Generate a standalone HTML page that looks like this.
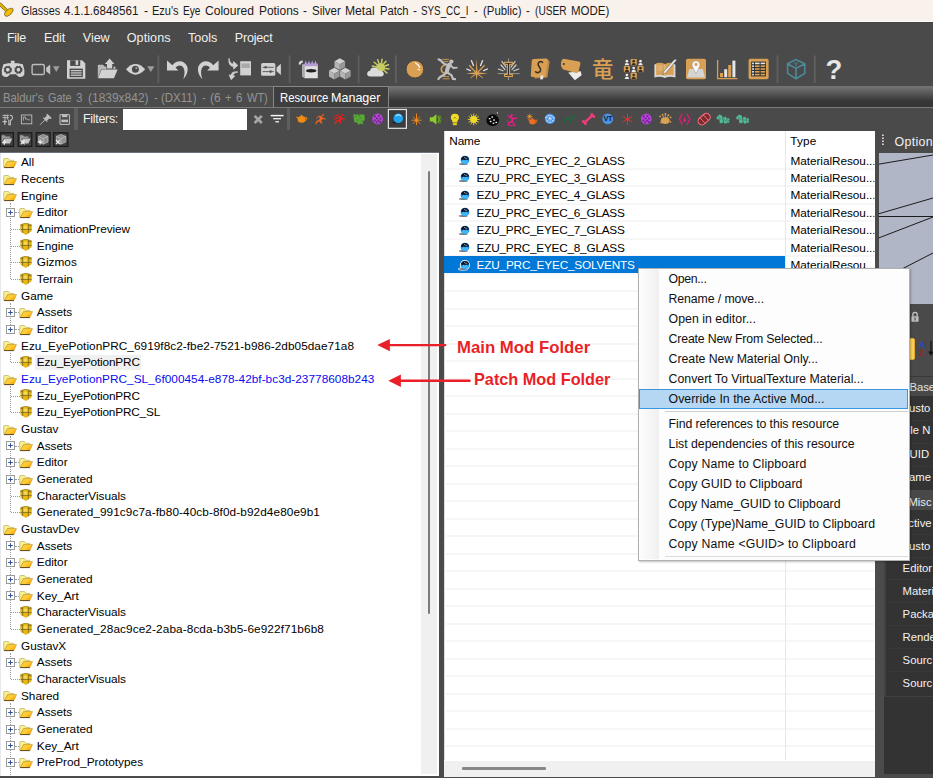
<!DOCTYPE html>
<html lang="en"><head><meta charset="utf-8"><title>Glasses - Resource Manager</title>
<style>
html,body{margin:0;padding:0;background:#4a4a4a;}
#app{position:relative;width:933px;height:778px;overflow:hidden;background:#4a4a4a;font-family:"Liberation Sans",sans-serif;}
#app div,#app span.t,#app svg{position:absolute;}
#app span.t{white-space:pre;line-height:20px;}
#app div.g{left:0;top:0;width:933px;height:778px;pointer-events:none;}
#app span.w{display:inline-block;white-space:pre;transform-origin:0 50%;}

</style></head>
<body>
<div id="app">
<div class="g" role="banner" aria-label="Title bar">
<div style="left:0px;top:0px;width:933px;height:22px;background:#f9f1eb;"></div>
<div style="left:0px;top:21px;width:933px;height:1px;background:#fdfcfb;"></div>
<div style="left:0px;top:22px;width:933px;height:1px;background:#454545;"></div>
<svg style="left:0;top:0" width="16" height="20" viewBox="0 0 16 20"><path d="M0 4.2 L6.2 10.2" stroke="#6a5408" stroke-width="3.2" stroke-linecap="round"/><path d="M0 4.2 L6.2 10.2" stroke="#e8b400" stroke-width="2.2" stroke-linecap="round"/><path d="M5.2 12 Q8 8.4 11.6 8.2 Q13.8 8.6 13 10.8 Q11.6 14.6 7.6 16.2 Q4.8 16.8 4.6 14.6 Q4.6 13 5.2 12 Z" fill="#f4be08" stroke="#5c4a10" stroke-width="0.7"/></svg>
<span class="t" style="left:20.70px;top:1.1px;font-size:12.3px;color:#1a1a1a;"><span class="w" style="width:43.20px;transform:scaleX(0.8801);">Glasses </span><span class="w" style="width:79.70px;transform:scaleX(0.9459);">4.1.1.6848561 </span><span class="w" style="width:8.20px;transform:scaleX(1.0010);">- </span><span class="w" style="width:31.10px;transform:scaleX(0.8959);">Ezu&#x27;s </span><span class="w" style="width:22.00px;transform:scaleX(0.8163);">Eye </span><span class="w" style="width:54.50px;transform:scaleX(0.9817);">Coloured </span><span class="w" style="width:44.00px;transform:scaleX(0.9678);">Potions </span><span class="w" style="width:8.60px;transform:scaleX(0.9522);">- </span><span class="w" style="width:33.30px;transform:scaleX(0.9362);">Silver </span><span class="w" style="width:34.50px;transform:scaleX(0.9876);">Metal </span><span class="w" style="width:33.00px;transform:scaleX(0.9093);">Patch </span><span class="w" style="width:8.60px;transform:scaleX(0.9522);">- </span><span class="w" style="width:52.40px;transform:scaleX(0.7987);">SYS_CC_I </span><span class="w" style="width:9.20px;transform:scaleX(0.9033);">- </span><span class="w" style="width:43.50px;transform:scaleX(0.9257);">(Public) </span><span class="w" style="width:8.30px;transform:scaleX(0.9278);">- </span><span class="w" style="width:36.50px;transform:scaleX(0.8258);">(USER </span><span class="w" style="width:39.30px;transform:scaleX(0.9342);">MODE)</span></span>
</div>
<div class="g" role="menubar" aria-label="Menu bar">
<span class="t" style="left:7px;top:27.6px;font-size:12.6px;color:#f0f0f0;letter-spacing:-0.374px;">File</span>
<span class="t" style="left:43.9px;top:27.6px;font-size:12.6px;color:#f0f0f0;letter-spacing:-0.101px;">Edit</span>
<span class="t" style="left:82.8px;top:27.6px;font-size:12.6px;color:#f0f0f0;letter-spacing:-0.070px;">View</span>
<span class="t" style="left:126.7px;top:27.6px;font-size:12.6px;color:#f0f0f0;letter-spacing:0.071px;">Options</span>
<span class="t" style="left:188.1px;top:27.6px;font-size:12.6px;color:#f0f0f0;letter-spacing:-0.061px;">Tools</span>
<span class="t" style="left:234.8px;top:27.6px;font-size:12.6px;color:#f0f0f0;letter-spacing:-0.215px;">Project</span>
</div>
<div class="g" role="toolbar" aria-label="Main toolbar">
<svg style="left:0;top:54px" width="933" height="32" viewBox="0 54 933 32"><path d="M3.4 64.2 Q13 61.6 22.8 64.2 Q25 69.5 24.3 74.8 Q22.4 77.6 19 76.9 L15.8 74.3 L10.4 74.3 L7.2 76.9 Q3.8 77.6 1.9 74.8 Q1.2 69.5 3.4 64.2 Z" fill="#d2d2d2"/><rect x="10.9" y="60.7" width="3.6" height="2.4" rx="0.6" fill="#d2d2d2"/><circle cx="7.8" cy="69.8" r="3.1" fill="none" stroke="#4a4a4a" stroke-width="2" stroke-dasharray="1.7 0.75"/><circle cx="7.8" cy="69.8" r="2.6" fill="none" stroke="#4a4a4a" stroke-width="1.3"/><circle cx="18.4" cy="69.8" r="3.1" fill="none" stroke="#4a4a4a" stroke-width="2" stroke-dasharray="1.7 0.75"/><circle cx="18.4" cy="69.8" r="2.6" fill="none" stroke="#4a4a4a" stroke-width="1.3"/><rect x="32.1" y="64.5" width="12.2" height="10" rx="1.6" fill="none" stroke="#bcbcbc" stroke-width="1.4"/><path d="M46.2 67.8 L50.2 64.4 L50.2 74.6 L46.2 71.2 Z" fill="#c4c4c4"/><path d="M53 66.2 H59.6 L56.3 72 Z" fill="#9c9c9c"/><path d="M67 60.3 H82.2 L85.3 63.4 V78.7 H67 Z" fill="#d2d2d2"/><rect x="70.2" y="60.3" width="10" height="5.6" fill="#4a4a4a"/><rect x="75.6" y="60.3" width="2.6" height="4.6" fill="#d2d2d2"/><rect x="69.6" y="68.6" width="13.2" height="8.6" fill="#4a4a4a"/><rect x="70.8" y="70.0" width="10.8" height="1.3" fill="#c8c8c8"/><rect x="70.8" y="72.3" width="10.8" height="1.3" fill="#c8c8c8"/><rect x="70.8" y="74.6" width="10.8" height="1.3" fill="#c8c8c8"/><path d="M97.8 78.2 V65.6 Q97.8 64.8 98.6 64.8 H103 L104.6 66.6 H106.4 V69.2 H101.2 L97.8 78.2 Z" fill="#b8b8b8"/><path d="M101.6 69.6 H117.6 L114 78.3 H98 Z" fill="#d2d2d2"/><path d="M109.6 58.4 L114.4 63.9 H112.2 V68.4 H107 V63.9 H104.8 Z" fill="#d2d2d2"/><path d="M113.4 66.6 H115.4 V69.2 H113.4 Z" fill="#b8b8b8"/><path d="M126 69.3 Q135.4 58.6 145.2 69.3 Q135.4 80 126 69.3 Z" fill="#d2d2d2"/><circle cx="135.4" cy="69.3" r="3.5" fill="#4a4a4a"/><circle cx="136.4" cy="68.2" r="1.1" fill="#9a9a9a"/><path d="M147.2 66.2 H154.4 L150.8 72 Z" fill="#9c9c9c"/><path d="M167 60.4 L172.4 65.2 C176 60 184 59.6 187 66 C188.8 70.5 186.6 76 183.3 78.9 C184.8 74.5 185 70.6 183.6 68 C181.8 64.7 178 64.8 175.6 67.8 L178.4 70.4 L167 70.4 Z" fill="#d2d2d2"/><path d="M218.6 60.4 L213.2 65.2 C209.6 60 201.6 59.6 198.6 66 C196.8 70.5 199.0 76 202.3 78.9 C200.8 74.5 200.6 70.6 202.0 68 C203.8 64.7 207.6 64.8 210.0 67.8 L207.2 70.4 L218.6 70.4 Z" fill="#d2d2d2"/><rect x="240.2" y="61.2" width="10.8" height="14.2" fill="#d2d2d2"/><rect x="241.4" y="63.4" width="8.4" height="4.6" fill="#aaaaaa"/><path d="M229 58.4 Q229.6 63.4 233.6 64.2 L233.6 61.6 L237.8 65.4 L233.6 69 L233.6 66.6 Q228 66 229 58.4 Z" fill="#d2d2d2" stroke="#d2d2d2" stroke-width="0.8"/><path d="M237.8 72 Q233.6 72.4 232.6 75.6 L234.8 76 L231.2 79.6 L229.2 75 L231 75.3 Q232 71 237.8 72 Z" fill="#d2d2d2" stroke="#d2d2d2" stroke-width="0.8"/><rect x="261.1" y="63" width="14.2" height="12.8" rx="1.6" fill="#d2d2d2"/><path d="M276.6 67.6 L280.9 63.8 L280.9 75 L276.6 71.2 Z" fill="#d2d2d2"/><path d="M262.6 67.3 H273.8 M262.6 71.6 H273.8" stroke="#555" stroke-width="0.9"/><circle cx="265.6" cy="67.3" r="1.3" fill="#555"/><circle cx="270.6" cy="71.6" r="1.3" fill="#555"/><path d="M302.2 64.6 H317.8 V78.2 H304.6 L302.2 76.2 Z" fill="#e0e0e0"/><path d="M302.2 64.6 L304.8 66 V78.2 L302.2 76.2 Z" fill="#a8a8a8"/><path d="M298.6 64.6 Q298.6 60.8 302.8 60.6 L302.8 62.4 Q300.6 62.8 300.8 64.6 Z" fill="#d8d8d8"/><rect x="304.4" y="63.6" width="13.4" height="2.6" fill="#b49ad6"/><path d="M304.5 64 L305.8 60.2 L307.1 64 Z" fill="#b49ad6"/><path d="M307.7 64 L309 60.2 L310.3 64 Z" fill="#b49ad6"/><path d="M310.9 64 L312.2 60.2 L313.5 64 Z" fill="#b49ad6"/><path d="M314.09999999999997 64 L315.4 60.2 L316.7 64 Z" fill="#b49ad6"/><ellipse cx="311.2" cy="70.8" rx="5.2" ry="1.7" fill="#222"/><path d="M339.8 58.300000000000004 L345.11 61.25 L339.8 64.2 L334.49 61.25 Z" fill="#d0d0d0"/><path d="M334.49 61.25 L339.8 64.2 L339.8 70.10000000000001 L334.49 67.15 Z" fill="#b4b4b4"/><path d="M345.11 61.25 L339.8 64.2 L339.8 70.10000000000001 L345.11 67.15 Z" fill="#989898"/><path d="M334.3 67.69999999999999 L339.61 70.64999999999999 L334.3 73.6 L328.99 70.64999999999999 Z" fill="#d0d0d0"/><path d="M328.99 70.64999999999999 L334.3 73.6 L334.3 79.5 L328.99 76.55 Z" fill="#b4b4b4"/><path d="M339.61 70.64999999999999 L334.3 73.6 L334.3 79.5 L339.61 76.55 Z" fill="#989898"/><path d="M345.4 67.69999999999999 L350.71 70.64999999999999 L345.4 73.6 L340.09 70.64999999999999 Z" fill="#d0d0d0"/><path d="M340.09 70.64999999999999 L345.4 73.6 L345.4 79.5 L340.09 76.55 Z" fill="#b4b4b4"/><path d="M350.71 70.64999999999999 L345.4 73.6 L345.4 79.5 L350.71 76.55 Z" fill="#989898"/><path d="M375.7 69.4 L372.7 70.5" stroke="#c6cc62" stroke-width="1.5" stroke-linecap="round"/><path d="M375.5 66.7 L372.3 66.1" stroke="#c6cc62" stroke-width="1.5" stroke-linecap="round"/><path d="M376.6 64.3 L374.2 62.2" stroke="#c6cc62" stroke-width="1.5" stroke-linecap="round"/><path d="M378.8 62.7 L377.7 59.7" stroke="#c6cc62" stroke-width="1.5" stroke-linecap="round"/><path d="M381.5 62.5 L382.1 59.3" stroke="#c6cc62" stroke-width="1.5" stroke-linecap="round"/><path d="M383.9 63.6 L386.0 61.2" stroke="#c6cc62" stroke-width="1.5" stroke-linecap="round"/><path d="M385.5 65.8 L388.5 64.7" stroke="#c6cc62" stroke-width="1.5" stroke-linecap="round"/><path d="M385.7 68.5 L388.9 69.1" stroke="#c6cc62" stroke-width="1.5" stroke-linecap="round"/><path d="M384.6 70.9 L387.0 73.0" stroke="#c6cc62" stroke-width="1.5" stroke-linecap="round"/><circle cx="380.6" cy="67.6" r="4.6" fill="#c6cc62"/><path d="M370.4 76.4 Q367 76.2 367.1 73.4 Q367.4 71 370 70.8 Q370.6 67.4 374.2 67.4 Q377.4 67.6 378.2 70.4 Q380.6 69.6 382 71.4 Q384 71.8 383.8 74.2 Q383.6 76.4 381 76.4 Z" fill="#dcdcdc"/><circle cx="414.9" cy="69.2" r="8.8" fill="#d9a054" stroke="#3a3a3a" stroke-width="0.8"/><path d="M415.6 63 Q418.6 64.4 419.6 67.4" stroke="#fff" stroke-width="1.3" fill="none" stroke-linecap="round"/><path d="M418 69.4 L419.8 69.8" stroke="#f4e6d0" stroke-width="1.2" fill="none" stroke-linecap="round"/><path d="M442.6 59.4 H449 M443.4 61.6 H448.4 M443 76.6 H449 M442.6 78.8 H449.4" stroke="#d9a054" stroke-width="0.9"/><path d="M445.4 64.6 Q439.6 67.4 441.8 71.4 Q443.6 73.8 447.4 73.2" stroke="#d9a054" stroke-width="1.7" fill="none"/><g stroke="#c0c0c0" fill="none" stroke-linecap="round" stroke-linejoin="round"><path d="M438.6 59.4 Q441.4 60 442.6 62.6 Q444.6 65 448.6 64.8" stroke-width="2.2"/><path d="M449.6 64.6 Q447 68 446.8 72" stroke-width="4.2"/><path d="M450.8 65.6 L453.4 68 L456.8 67.6" stroke-width="1.9"/><path d="M446.4 72.4 Q444 75.8 440.6 76.6 L438.4 79" stroke-width="2.2"/><path d="M447.6 72.6 L451.6 75.4 L453 79 L455 79.2" stroke-width="2.2"/></g><circle cx="451.4" cy="61.6" r="2.1" fill="#c0c0c0"/><path d="M476.6 58.4 L477.5 72.2 L488.2 73.4 L477.5 74.6 L476.6 80.2 L475.7 74.6 L465.8 73.4 L475.7 72.2 Z" fill="#d9a054"/><path d="M469.2 65.2 L476.6 73.4 L484.6 65.2" stroke="#d9a054" stroke-width="1.3" fill="none"/><path d="M470.6 77.8 L476.6 73.4 L482.8 77.8" stroke="#d9a054" stroke-width="1" fill="none"/><path d="M471.4 60.6 L473.4 65.6 M482.6 60.6 L480.6 65.6 M466.8 69 L470.4 70.6 M487.4 69 L483.6 70.6" stroke="#e4e4e4" stroke-width="1.3" stroke-linecap="round"/><path d="M508.5 58.6 V80 M497.6 73.6 H519.6" stroke="#a8a8a8" stroke-width="0.8"/><path d="M502 61.6 L506 67 M515 61.6 L511 67 M498.4 69 L503 70.8 M518.8 69 L514 70.8 M501 65 L505 69.6 M516 65 L512 69.6" stroke="#cfcfcf" stroke-width="1.2" stroke-linecap="round"/><path d="M504.6 62.4 H512.4 V64.4 H509.6 V74.4 H512.4 V76.4 H504.6 V74.4 H507.4 V64.4 H504.6 Z" fill="#2c2c2c" stroke="#d9a054" stroke-width="1.1"/><path d="M534 61.2 L548 60.2 Q549.8 60.4 549.6 62.2 L547.4 77.6 L534.4 78.6 Z" fill="#c08a44"/><path d="M533.6 59 L546.2 58.6 Q548 58.8 547.8 60.6 L545.6 75.4 Q545.4 76.8 544 76.8 L532.2 77 Q530.6 76.8 530.8 75.2 L531.8 60.6 Q532 59 533.6 59 Z" fill="#d9a054"/><path d="M542.6 62.4 Q540.4 60.6 538.6 62.6 Q537.4 64.6 539.4 67 Q541.4 69.6 540 71.6 Q538.2 73.6 535.6 71.8" stroke="#3a3020" stroke-width="1.5" fill="none" stroke-linecap="round"/><path d="M540.6 75.6 L543.4 75.4 L543 79.2 L540.2 79.4 Z" fill="#e8e8e8"/><path d="M568.2 72.6 L580.8 71.2 L581.6 75.2 L574.8 80.2 Z" fill="#ececec"/><path d="M563.6 58.8 L579 61.6 Q580.8 62.2 580.4 64 L578.4 71.8 Q577.8 73.4 576 73 L563.4 69.4 Q560.6 67 561 63.4 Q561.4 59.6 563.6 58.8 Z" fill="#d9a054"/><circle cx="563.8" cy="64" r="1.1" fill="#3a3a3a"/><circle cx="626.9" cy="61.2" r="1.35" fill="#ececec"/><path d="M624.7 65.3 Q624.7 62.9 626.9 62.9 Q629.1 62.9 629.1 65.3 Z" fill="#ececec"/><rect x="630.6" y="59.0" width="6.2" height="6.4" rx="0.8" fill="#d9a054"/><circle cx="633.7" cy="61.2" r="1.35" fill="#3a3020"/><path d="M631.5 65.3 Q631.5 62.9 633.7 62.9 Q635.9 62.9 635.9 65.3 Z" fill="#3a3020"/><circle cx="640.5" cy="61.2" r="1.35" fill="#ececec"/><path d="M638.3 65.3 Q638.3 62.9 640.5 62.9 Q642.7 62.9 642.7 65.3 Z" fill="#ececec"/><rect x="623.8" y="65.9" width="6.2" height="6.4" rx="0.8" fill="#d9a054"/><circle cx="626.9" cy="68.1" r="1.35" fill="#3a3020"/><path d="M624.7 72.2 Q624.7 69.8 626.9 69.8 Q629.1 69.8 629.1 72.2 Z" fill="#3a3020"/><circle cx="633.7" cy="68.1" r="1.35" fill="#ececec"/><path d="M631.5 72.2 Q631.5 69.8 633.7 69.8 Q635.9 69.8 635.9 72.2 Z" fill="#ececec"/><rect x="637.4" y="65.9" width="6.2" height="6.4" rx="0.8" fill="#d9a054"/><circle cx="640.5" cy="68.1" r="1.35" fill="#3a3020"/><path d="M638.3 72.2 Q638.3 69.8 640.5 69.8 Q642.7 69.8 642.7 72.2 Z" fill="#3a3020"/><circle cx="626.9" cy="75.0" r="1.35" fill="#ececec"/><path d="M624.7 79.1 Q624.7 76.7 626.9 76.7 Q629.1 76.7 629.1 79.1 Z" fill="#ececec"/><rect x="630.6" y="72.8" width="6.2" height="6.4" rx="0.8" fill="#d9a054"/><circle cx="633.7" cy="75.0" r="1.35" fill="#3a3020"/><path d="M631.5 79.1 Q631.5 76.7 633.7 76.7 Q635.9 76.7 635.9 79.1 Z" fill="#3a3020"/><path d="M654.4 64.4 Q660 62.4 664.8 64.6 Q669.6 62.4 675.4 64.4 V77.4 Q669.6 75.6 664.8 78 Q660 75.6 654.4 77.4 Z" fill="#d8d8d8"/><path d="M656.2 63.2 Q660.6 62 664.6 64 V75.8 Q660.6 74 656.2 75.2 Z" fill="#d9a054"/><path d="M673.6 63.2 Q669.2 62 665.2 64 V75.8 Q669.2 74 673.6 75.2 Z" fill="#d9a054"/><path d="M657.6 66 H662.4 M657.6 68 H662.4 M657.6 70 H661.6" stroke="#e8d0a8" stroke-width="0.7"/><path d="M662.8 74.6 L663.6 71.4 L674.4 59.4 Q676 58.6 676.6 60.2 L666 72.8 Z" fill="#e6e6e6" stroke="#555" stroke-width="0.5"/><rect x="686" y="58.8" width="20" height="20.4" rx="1.6" fill="#d9a054"/><path d="M689.4 69 H702.8 L705 77.6 H687 Z" fill="#d4d4d4"/><path d="M696 73.4 Q692 67 692 64.6 Q692.2 61 696 60.8 Q699.8 61 700 64.6 Q700 67 696 73.4 Z" fill="#fafafa" stroke="#777" stroke-width="0.4"/><circle cx="696" cy="64.4" r="1.6" fill="#d9a054"/><path d="M717.6 60 V78.6 H737.4" stroke="#d9a054" stroke-width="1.3" fill="none"/><rect x="720" y="73" width="3" height="4.2" fill="#d9a054"/><rect x="724.2" y="69.2" width="3" height="8" fill="#e6e6e6"/><rect x="728.2" y="65" width="3" height="12.2" fill="#d9a054"/><rect x="732.4" y="60.6" width="3" height="16.6" fill="#e6e6e6"/><rect x="748.6" y="58.8" width="20" height="20.4" rx="1.6" fill="#d9a054"/><rect x="751.2" y="61.6" width="14.8" height="14.8" fill="#333"/><rect x="752" y="62.6" width="2" height="1.6" fill="#d8d8d8"/><rect x="755" y="62.6" width="4.6" height="1.6" fill="#e6e6e6"/><rect x="760.6" y="62.6" width="4.6" height="1.6" fill="#e6e6e6"/><rect x="752" y="65.4" width="2" height="1.6" fill="#d8d8d8"/><rect x="755" y="65.4" width="4.6" height="1.6" fill="#d9a054"/><rect x="760.6" y="65.4" width="4.6" height="1.6" fill="#d9a054"/><rect x="752" y="68.2" width="2" height="1.6" fill="#d8d8d8"/><rect x="755" y="68.2" width="4.6" height="1.6" fill="#d9a054"/><rect x="760.6" y="68.2" width="4.6" height="1.6" fill="#d9a054"/><rect x="752" y="71.0" width="2" height="1.6" fill="#d8d8d8"/><rect x="755" y="71.0" width="4.6" height="1.6" fill="#d9a054"/><rect x="760.6" y="71.0" width="4.6" height="1.6" fill="#d9a054"/><rect x="752" y="73.8" width="2" height="1.6" fill="#d8d8d8"/><rect x="755" y="73.8" width="4.6" height="1.6" fill="#d9a054"/><rect x="760.6" y="73.8" width="4.6" height="1.6" fill="#d9a054"/><path d="M795.6 59.6 L804.8 63.8 V73.4 L796 78.8 L787.6 73.4 V63.8 Z M787.6 63.8 L796 68.4 L804.8 63.8 M796 68.4 V78.8" fill="none" stroke="#4b8b99" stroke-width="1.6" stroke-linejoin="round"/><path d="M794 62.2 L795.9 64.6 L797.8 62.2 M795.9 64.6 V66.6" fill="none" stroke="#4b8b99" stroke-width="1"/><rect x="157.5" y="55.4" width="1.8" height="27.6" fill="#5f5f5f"/><rect x="288.7" y="55.4" width="1.8" height="27.6" fill="#5f5f5f"/><rect x="357.7" y="55.4" width="1.8" height="27.6" fill="#5f5f5f"/><rect x="395.0" y="55.4" width="1.8" height="27.6" fill="#5f5f5f"/><rect x="776.6" y="55.4" width="1.8" height="27.6" fill="#5f5f5f"/><rect x="813.9" y="55.4" width="1.8" height="27.6" fill="#5f5f5f"/></svg>
<span class="t" style="left:592.0px;top:58.2px;font-size:21.4px;color:#d9a054;font-weight:500;line-height:24px;font-family:'Liberation Sans','Noto Sans CJK JP',sans-serif;">竜</span>
<span class="t" style="left:825.4px;top:54.7px;font-size:27.5px;color:#e6e6e6;font-weight:bold;line-height:30px;">?</span>
</div>
<div class="g" role="tablist" aria-label="Document tabs">
<div style="left:0px;top:86px;width:933px;height:21px;background:linear-gradient(#767676 0%,#363636 72%,#363636 100%);"></div>
<div style="left:0px;top:107px;width:933px;height:1px;background:#7a7a7a;"></div>
<div style="left:0px;top:86px;width:273.4px;height:21px;background:#4b4b4b;border-top:1.4px solid #757575;box-sizing:border-box;"></div>
<span class="t" style="left:2.80px;top:87.5px;font-size:12.4px;color:#949494;"><span class="w" style="width:45.50px;transform:scaleX(0.9096);">Baldur&#x27;s </span><span class="w" style="width:27.60px;transform:scaleX(0.8779);">Gate </span><span class="w" style="width:12.50px;transform:scaleX(0.9428);">3 </span><span class="w" style="width:65.40px;transform:scaleX(0.9660);">(1839x842) </span><span class="w" style="width:7.70px;transform:scaleX(0.8961);">- </span><span class="w" style="width:40.10px;transform:scaleX(0.9256);">(DX11) </span><span class="w" style="width:8.40px;transform:scaleX(0.8718);">- </span><span class="w" style="width:15.40px;transform:scaleX(0.9706);">(6 </span><span class="w" style="width:10.60px;transform:scaleX(0.9114);">+ </span><span class="w" style="width:10.60px;transform:scaleX(0.9283);">6 </span><span class="w" style="width:21.80px;transform:scaleX(0.8885);">WT)</span></span>
<div style="left:273px;top:86px;width:115.7px;height:21px;background:#3e3e3e;border:1.9px solid #888888;border-bottom:none;box-sizing:border-box;"></div>
<span class="t" style="left:279.60px;top:87.5px;font-size:12.4px;color:#ffffff;"><span class="w" style="width:51.90px;transform:scaleX(0.9120);">Resource </span><span class="w" style="width:50.50px;transform:scaleX(1.0114);">Manager</span></span>
</div>
<div class="g" role="toolbar" aria-label="Resource filters">
<div style="left:74.4px;top:108px;width:3.4px;height:21.8px;background:#5e5e5e;"></div>
<span class="t" style="left:83px;top:109.0px;font-size:12.4px;color:#f0f0f0;letter-spacing:-0.273px;">Filters:</span>
<div style="left:123px;top:108.8px;width:124px;height:21px;background:#ffffff;"></div>
<div style="left:287.2px;top:108px;width:3px;height:21.8px;background:#5e5e5e;"></div>
<svg style="left:0;top:108px" width="933" height="42" viewBox="0 108 933 42"><path d="M2.4 115.4 H9 M2.4 117.6 H9 M5 114.6 V119.6 M7.4 114.6 V119.6" stroke="#bdbdbd" stroke-width="0.9"/><path d="M9.8 115.4 Q12.6 115 12.4 118 Q12.2 120 10.4 120.4 V124.6 H8.8 V119.6" stroke="#bdbdbd" stroke-width="1.1" fill="none"/><path d="M2.6 121.6 H7 M4.8 119.6 V124.8" stroke="#bdbdbd" stroke-width="1.3"/><rect x="21.4" y="115" width="10.4" height="8.8" fill="none" stroke="#bdbdbd" stroke-width="0.9"/><path d="M23.4 120.6 V117 H25.4 V119 H27 M27 119 L28.4 119.8 H30" stroke="#bdbdbd" stroke-width="0.8" fill="none"/><path d="M40 124.8 L45 119.8" stroke="#bdbdbd" stroke-width="0.9"/><path d="M43.4 117.6 L47.4 121.6 M44.6 119 L47.6 115.6 L49.6 117.6 L46.2 120.6 Z" stroke="#bdbdbd" stroke-width="1.2" fill="#bdbdbd" stroke-linejoin="round"/><path d="M47.2 114.8 L50.6 118.2" stroke="#bdbdbd" stroke-width="1.7" stroke-linecap="round"/><path d="M60 114.6 H69.4 V124.4 H60 Z" fill="none" stroke="#bdbdbd" stroke-width="1"/><rect x="62" y="114.6" width="5.4" height="2.6" fill="#bdbdbd"/><rect x="61.4" y="119.6" width="6.6" height="2.6" fill="#bdbdbd"/><path d="M254.6 115.8 L261.8 123 M261.8 115.8 L254.6 123" stroke="#a6a6a6" stroke-width="2.6"/><path d="M270.7 115.6 H283.6" stroke="#f4f4f4" stroke-width="1.5"/><path d="M273.2 118.7 H281" stroke="#f4f4f4" stroke-width="1.3"/><path d="M275.4 121.8 H279" stroke="#f4f4f4" stroke-width="1.3"/><ellipse cx="301.6" cy="119.39999999999999" rx="3.9" ry="3.3" fill="#f28c12"/><path d="M298.20000000000005 119.2 L296.0 117.0 L296.6 116.39999999999999 L299.0 118.0 Z" fill="#f28c12"/><path d="M304.8 118.2 Q307.6 116.2 306.6 119.39999999999999 Q306.0 120.6 305.0 120.6" stroke="#f28c12" stroke-width="1" fill="none"/><circle cx="301.6" cy="115.6" r="0.9" fill="#f28c12"/><path d="M322.4 113.9 Q323.8 113.7 323.8 115.10000000000001 Q323.59999999999997 116.3 322.4 116.10000000000001 Q321.59999999999997 115.10000000000001 322.4 113.9 Z M318.59999999999997 115.7 L321.8 116.10000000000001 L322.8 118.10000000000001 L325.8 118.5 L325.59999999999997 119.5 L322.2 119.3 L321.2 121.10000000000001 L322.59999999999997 123.3 L321.2 123.7 L319.4 121.5 L317.59999999999997 121.9 L316.0 124.5 L315.2 123.9 L316.59999999999997 120.7 L319.0 119.9 L320.0 117.3 L318.2 117.10000000000001 L317.0 118.9 L316.2 118.3 Z" fill="#f0641e"/><path d="M341.8 113.9 Q343.20000000000005 113.7 343.20000000000005 115.10000000000001 Q343.0 116.3 341.8 116.10000000000001 Q341.0 115.10000000000001 341.8 113.9 Z M338.0 115.7 L341.20000000000005 116.10000000000001 L342.20000000000005 118.10000000000001 L345.20000000000005 118.5 L345.0 119.5 L341.6 119.3 L340.6 121.10000000000001 L342.0 123.3 L340.6 123.7 L338.8 121.5 L337.0 121.9 L335.40000000000003 124.5 L334.6 123.9 L336.0 120.7 L338.40000000000003 119.9 L339.40000000000003 117.3 L337.6 117.10000000000001 L336.40000000000003 118.9 L335.6 118.3 Z" fill="#e8201c"/><path d="M334.2 116.2 L338.6 114.4 M333.8 119.4 L338.2 117.6 M334.4 122.6 L338.2 120.8" stroke="#e8201c" stroke-width="1"/><path d="M353.2 114.6 L364.4 114.4 L364.8 119.6 L362.6 122.2 L363.4 124.4 L360.2 123.4 L358.8 125 L357 122.6 L354.4 122.2 Z" fill="#5aa83a"/><path d="M355 116.6 H357 M359 118 H361.4 M356.4 120 H358.4 M361 121 H362.6 M358 115.4 H360" stroke="#3c7c26" stroke-width="0.9"/><circle cx="377.6" cy="119" r="5.4" fill="#b444d8"/><rect x="374.2" y="115.6" width="1.6" height="1.6" fill="#5a2470"/><rect x="378.0" y="115.2" width="1.6" height="1.6" fill="#5a2470"/><rect x="376.0" y="117.6" width="1.6" height="1.6" fill="#5a2470"/><rect x="379.6" y="117.8" width="1.6" height="1.6" fill="#5a2470"/><rect x="373.8" y="119.6" width="1.6" height="1.6" fill="#5a2470"/><rect x="377.6" y="119.8" width="1.6" height="1.6" fill="#5a2470"/><rect x="375.8" y="121.6" width="1.6" height="1.6" fill="#5a2470"/><rect x="379.4" y="121.2" width="1.6" height="1.6" fill="#5a2470"/><rect x="388.4" y="109.5" width="18" height="18.8" fill="#3c3c3c" stroke="#e4e4e4" stroke-width="1.2"/><ellipse cx="396.8" cy="122.6" rx="4.6" ry="1" fill="#222"/><circle cx="398.3" cy="118.4" r="4.8" fill="#21a4ee"/><path d="M396 115.6 Q398.6 114.2 400.8 115.8" stroke="#a8e4ff" stroke-width="1.2" fill="none" stroke-linecap="round"/><path d="M416.5 120.2 L416.5 115.2" stroke="#f08a1c" stroke-width="0.9"/><path d="M416.5 120.2 L420.0 116.7" stroke="#f08a1c" stroke-width="0.9"/><path d="M416.5 120.2 L421.5 120.2" stroke="#f08a1c" stroke-width="0.9"/><path d="M416.5 120.2 L420.0 123.7" stroke="#f08a1c" stroke-width="0.9"/><path d="M416.5 120.2 L416.5 125.2" stroke="#f08a1c" stroke-width="0.9"/><path d="M416.5 120.2 L413.0 123.7" stroke="#f08a1c" stroke-width="0.9"/><path d="M416.5 120.2 L411.5 120.2" stroke="#f08a1c" stroke-width="0.9"/><path d="M416.5 120.2 L413.0 116.7" stroke="#f08a1c" stroke-width="0.9"/><circle cx="416.5" cy="120.2" r="1.6" fill="#f08a1c"/><path d="M416.5 113.6 V120" stroke="#f08a1c" stroke-width="1"/><path d="M429.8 117.2 H432.6 L436.4 114.2 V124.6 L432.6 121.6 H429.8 Z" fill="#8ccc2c"/><path d="M438 116 Q440.4 119.4 438 122.8" stroke="#6ea626" stroke-width="1.6" fill="none"/><path d="M439.8 115 Q442.4 119.4 439.8 123.8" stroke="#5c8c22" stroke-width="1" fill="none"/><path d="M454.9 113.8 Q459 114 459 117.8 Q458.8 119.6 457.4 121 V122.6 H452.4 V121 Q451 119.6 450.8 117.8 Q450.8 114 454.9 113.8 Z" fill="#f0dc28"/><rect x="452.8" y="123" width="4.2" height="2.2" rx="0.8" fill="#e4c81c"/><path d="M453.6 118.6 L454.9 117 L456.2 118.6" stroke="#8a7a10" stroke-width="0.7" fill="none"/><path d="M473.7 119.4 L473.7 113.6" stroke="#f0dc28" stroke-width="0.9"/><path d="M473.7 119.4 L476.6 114.4" stroke="#f0dc28" stroke-width="0.9"/><path d="M473.7 119.4 L478.7 116.5" stroke="#f0dc28" stroke-width="0.9"/><path d="M473.7 119.4 L479.5 119.4" stroke="#f0dc28" stroke-width="0.9"/><path d="M473.7 119.4 L478.7 122.3" stroke="#f0dc28" stroke-width="0.9"/><path d="M473.7 119.4 L476.6 124.4" stroke="#f0dc28" stroke-width="0.9"/><path d="M473.7 119.4 L473.7 125.2" stroke="#f0dc28" stroke-width="0.9"/><path d="M473.7 119.4 L470.8 124.4" stroke="#f0dc28" stroke-width="0.9"/><path d="M473.7 119.4 L468.7 122.3" stroke="#f0dc28" stroke-width="0.9"/><path d="M473.7 119.4 L467.9 119.4" stroke="#f0dc28" stroke-width="0.9"/><path d="M473.7 119.4 L468.7 116.5" stroke="#f0dc28" stroke-width="0.9"/><path d="M473.7 119.4 L470.8 114.4" stroke="#f0dc28" stroke-width="0.9"/><circle cx="473.7" cy="119.4" r="3.4" fill="#f0dc28"/><path d="M488 116.4 Q492 112.8 496 115.4 Q499.6 117.6 498.8 121.6 Q497.8 125.8 493 126 Q488 126 486.6 122 Q485.8 118.6 488 116.4 Z" fill="#060606"/><path d="M496.6 114.6 L497.6 112.6" stroke="#060606" stroke-width="1"/><circle cx="497.4" cy="113" r="0.7" fill="#eee"/><rect x="488.8" y="118.0" width="1.7" height="1.3" fill="#f4f4f4"/><rect x="491.4" y="116.4" width="1.7" height="1.3" fill="#f4f4f4"/><rect x="489.8" y="120.80000000000001" width="1.7" height="1.3" fill="#f4f4f4"/><rect x="493.2" y="119.4" width="1.7" height="1.3" fill="#f4f4f4"/><rect x="495.4" y="121.80000000000001" width="1.7" height="1.3" fill="#f4f4f4"/><rect x="492.59999999999997" y="122.60000000000001" width="1.7" height="1.3" fill="#f4f4f4"/><path d="M511 114 Q512.6 113.6 512.8 115.2 Q512.6 116.6 511.4 116.6 L513.4 118 L517.2 117.4 L517.4 118.4 L513.4 119.6 L513 121.6 L515.4 124.8 L514.2 125.2 L512 122.6 L510.2 123 L509 125.2 L507.6 124.8 L509 121.8 L511.2 121 L511.4 118.6 L509.2 117.8 L507.6 115.6 L508.4 115 L510 116.6 Z" fill="#ea1a86"/><path d="M507.6 125.4 H516" stroke="#ea1a86" stroke-width="0.9"/><path d="M508 119.6 Q506.6 121.6 508.4 123" stroke="#ea1a86" stroke-width="0.8" fill="none"/><ellipse cx="532.4" cy="121.8" rx="3.198" ry="2.7059999999999995" fill="#ee6e22"/><path d="M529.612 121.60000000000001 L527.808 119.4 L528.3 118.8 L530.268 120.4 Z" fill="#ee6e22"/><path d="M535.024 120.60000000000001 Q537.3199999999999 118.60000000000001 536.5 121.8 Q536.0079999999999 123.0 535.188 123.0" stroke="#ee6e22" stroke-width="1" fill="none"/><circle cx="532.4" cy="118.57600000000001" r="0.9" fill="#ee6e22"/><path d="M529.6 116.6 L529.6 113.8" stroke="#f0a020" stroke-width="0.7"/><path d="M529.6 116.6 L531.6 114.6" stroke="#f0a020" stroke-width="0.7"/><path d="M529.6 116.6 L532.4 116.6" stroke="#f0a020" stroke-width="0.7"/><path d="M529.6 116.6 L531.6 118.6" stroke="#f0a020" stroke-width="0.7"/><path d="M529.6 116.6 L529.6 119.4" stroke="#f0a020" stroke-width="0.7"/><path d="M529.6 116.6 L527.6 118.6" stroke="#f0a020" stroke-width="0.7"/><path d="M529.6 116.6 L526.8 116.6" stroke="#f0a020" stroke-width="0.7"/><path d="M529.6 116.6 L527.6 114.6" stroke="#f0a020" stroke-width="0.7"/><circle cx="529.6" cy="116.6" r="0.9" fill="#f0a020"/><circle cx="550" cy="118.7" r="5.3" fill="#3a8ae4"/><path d="M545.6 117 L548.4 115 L551.6 115.6 L554.4 117.6 L553.4 121.2 L550 122.8 L546.8 121.4 Z M548.4 115 L550 118.6 L553.4 121.2 M545.6 117 L550 118.6 L554.4 117.6 M546.8 121.4 L550 118.6 M551.6 115.6 L550 118.6 L550 122.8" stroke="#e6f0fc" stroke-width="0.6" fill="none"/><path d="M564.2 121.6 L567.6 117.6 L570.6 121.4 L574.2 115.8" stroke="#1a6c3c" stroke-width="1.5" fill="none" stroke-linejoin="round"/><circle cx="564.2" cy="121.6" r="1.1" fill="#1a6c3c"/><circle cx="567.6" cy="117.6" r="1.1" fill="#1a6c3c"/><circle cx="570.6" cy="121.4" r="1.1" fill="#1a6c3c"/><circle cx="574.2" cy="115.8" r="1.1" fill="#1a6c3c"/><path d="M584.6 122.4 L592.6 115.4" stroke="#f23a7c" stroke-width="2.4" stroke-linecap="round"/><circle cx="583.4" cy="121.6" r="1.5" fill="#f23a7c"/><circle cx="585.4" cy="123.6" r="1.5" fill="#f23a7c"/><circle cx="591.8" cy="114.4" r="1.5" fill="#f23a7c"/><circle cx="593.8" cy="116.4" r="1.5" fill="#f23a7c"/><circle cx="607.7" cy="118.9" r="5.4" fill="#4a92e2"/><path d="M627.5 119.2 L627.5 113.6" stroke="#e23232" stroke-width="1.0"/><path d="M627.5 119.2 L632.3 116.4" stroke="#e23232" stroke-width="1.0"/><path d="M627.5 119.2 L632.3 122.0" stroke="#e23232" stroke-width="1.0"/><path d="M627.5 119.2 L627.5 124.8" stroke="#e23232" stroke-width="1.0"/><path d="M627.5 119.2 L622.7 122.0" stroke="#e23232" stroke-width="1.0"/><path d="M627.5 119.2 L622.7 116.4" stroke="#e23232" stroke-width="1.0"/><circle cx="627.5" cy="119.2" r="1.3" fill="#e23232"/><circle cx="646.3" cy="119" r="5.4" fill="#b444d8"/><rect x="642.9" y="115.6" width="1.6" height="1.6" fill="#5a2470"/><rect x="646.7" y="115.2" width="1.6" height="1.6" fill="#5a2470"/><rect x="644.7" y="117.6" width="1.6" height="1.6" fill="#5a2470"/><rect x="648.3" y="117.8" width="1.6" height="1.6" fill="#5a2470"/><rect x="642.5" y="119.6" width="1.6" height="1.6" fill="#5a2470"/><rect x="646.3" y="119.8" width="1.6" height="1.6" fill="#5a2470"/><rect x="644.5" y="121.6" width="1.6" height="1.6" fill="#5a2470"/><rect x="648.1" y="121.2" width="1.6" height="1.6" fill="#5a2470"/><ellipse cx="665.2" cy="120.6" rx="4.4" ry="3.4" fill="#d8a252"/><circle cx="660.2" cy="116.4" r="0.9" fill="#d8a252"/><circle cx="662.6" cy="114.6" r="0.9" fill="#d8a252"/><circle cx="665.4" cy="114" r="0.9" fill="#d8a252"/><circle cx="668.4" cy="115.2" r="0.9" fill="#d8a252"/><circle cx="670.6" cy="117.4" r="0.9" fill="#d8a252"/><circle cx="661" cy="122.6" r="0.9" fill="#d8a252"/><circle cx="670.4" cy="121.8" r="0.9" fill="#d8a252"/><path d="M662.6 115 L664 118 M668.4 115.4 L667 118 M665.4 114.2 V117.4" stroke="#d8a252" stroke-width="0.8"/><path d="M682.4 113.8 L679.4 119.2 L682.4 124.6 M687 113.8 L690 119.2 L687 124.6" stroke="#e21a7a" stroke-width="1.3" fill="none"/><path d="M684.7 116.6 L686.2 121 H683.2 Z" fill="#e21a7a"/><circle cx="684.7" cy="120.4" r="1.5" fill="#e21a7a"/><g transform="rotate(-42 704.2 119.1)"><rect x="697.4" y="115.3" width="13.6" height="7.6" rx="3.8" fill="#7c2a30" stroke="#f2707a" stroke-width="1.1"/><path d="M702 115.3 V122.9 M706.4 115.3 V122.9" stroke="#f2707a" stroke-width="0.9"/></g><path d="M716.8 117.39999999999999 L719.4 115.0 L721.8 115.8 L722.8 122.39999999999999 L720.1999999999999 123.0 L719.5999999999999 118.6 L717.4 119.19999999999999 Z" fill="#54bc9c" stroke="#54bc9c" stroke-width="0.7" stroke-linejoin="round"/><path d="M723.4 117.8 L725.8 117.0 L726.8 123.0 L724.4 123.19999999999999 Z M727.1999999999999 118.39999999999999 L729.1999999999999 118.8 L728.8 122.6 L727.4 122.39999999999999 Z" fill="#54bc9c" stroke="#54bc9c" stroke-width="0.6" stroke-linejoin="round"/><path d="M718.4 117.0 L721.4 119.6 M724.0 119.0 L726.0 121.19999999999999 M727.5999999999999 119.6 L728.8 121.0" stroke="#2e7c64" stroke-width="0.7"/><path d="M736.4 117.39999999999999 L739.0 115.0 L741.4 115.8 L742.4 122.39999999999999 L739.8 123.0 L739.1999999999999 118.6 L737.0 119.19999999999999 Z" fill="#54bc9c" stroke="#54bc9c" stroke-width="0.7" stroke-linejoin="round"/><path d="M743.0 117.8 L745.4 117.0 L746.4 123.0 L744.0 123.19999999999999 Z M746.8 118.39999999999999 L748.8 118.8 L748.4 122.6 L747.0 122.39999999999999 Z" fill="#54bc9c" stroke="#54bc9c" stroke-width="0.6" stroke-linejoin="round"/><path d="M738.0 117.0 L741.0 119.6 M743.6 119.0 L745.6 121.19999999999999 M747.1999999999999 119.6 L748.4 121.0" stroke="#2e7c64" stroke-width="0.7"/><rect x="0.2" y="132.8" width="13.2" height="13.6" fill="#414141" stroke="#1c1c1c" stroke-width="1.3"/><rect x="18.2" y="132.8" width="13.6" height="13.6" fill="#414141" stroke="#1c1c1c" stroke-width="1.3"/><rect x="36.2" y="132.8" width="13.8" height="13.6" fill="#414141" stroke="#1c1c1c" stroke-width="1.3"/><rect x="53.6" y="132.8" width="14.2" height="13.6" fill="#414141" stroke="#1c1c1c" stroke-width="1.3"/><path d="M1.6 135.2 H4.6 L5.6 136.4 H10.2 V138 H4.0 L1.6 142.6 Z" fill="#9a9a9a"/><path d="M4.4 138.6 H12.2 L10.0 143.4 H2.2 Z" fill="#c4c4c4"/><path d="M2.0 142.4 H6.6 M4.300000000000001 140 V144.8" stroke="#eaeaea" stroke-width="1.3"/><path d="M20 135.2 H23 L24 136.4 H28.6 V138 H22.4 L20 142.6 Z" fill="#9a9a9a"/><path d="M22.8 138.6 H30.6 L28.4 143.4 H20.6 Z" fill="#c4c4c4"/><path d="M20.8 140.4 L24.6 144.4 M24.6 140.4 L20.8 144.4" stroke="#eaeaea" stroke-width="1.2"/><path d="M43.2 134.4 L48.0 136.4 V142.0 L43.2 144.20000000000002 L38.6 142.0 V136.4 Z" fill="#8e8e8e" stroke="#bcbcbc" stroke-width="0.7"/><path d="M38.6 136.4 L43.2 138.6 L48.0 136.4 M43.2 138.6 V144.20000000000002" stroke="#cfcfcf" stroke-width="0.6" fill="none"/><path d="M37.800000000000004 142.0 H42.4 M40.1 139.6 V144.4" stroke="#eaeaea" stroke-width="1.3"/><path d="M61.0 134.4 L65.8 136.4 V142.0 L61.0 144.20000000000002 L56.4 142.0 V136.4 Z" fill="#8e8e8e" stroke="#bcbcbc" stroke-width="0.7"/><path d="M56.4 136.4 L61.0 138.6 L65.8 136.4 M61.0 138.6 V144.20000000000002" stroke="#cfcfcf" stroke-width="0.6" fill="none"/><path d="M56.0 140.20000000000002 L59.8 144.20000000000002 M59.8 140.20000000000002 L56.0 144.20000000000002" stroke="#eaeaea" stroke-width="1.2"/></svg>
<span class="t" style="left:603.4px;top:113.9px;font-size:7.4px;color:#10203c;font-weight:bold;line-height:10px;letter-spacing:-0.427px;">VT</span>
</div>
<div class="g" role="tree" aria-label="Resource folders">
<div style="left:0px;top:153px;width:439px;height:623px;background:#ffffff;"></div>
<div style="left:0px;top:153px;width:1.2px;height:623px;background:#e6e8ec;"></div>
<div style="left:0px;top:152px;width:439px;height:1px;background:#6c7280;"></div>
<div style="left:420.9px;top:154px;width:16.2px;height:620px;background:#f0f0f0;"></div>
<div style="left:427.7px;top:171.4px;width:2.4px;height:442.4px;background:#7c7c7c;border-radius:1.2px;"></div>
<div style="left:10px;top:202.73px;width:0px;height:76.33px;background:transparent;border-left:1px dotted #999;"></div>
<div style="left:10px;top:302.73px;width:0px;height:22.03px;background:transparent;border-left:1px dotted #999;"></div>
<div style="left:10px;top:352.73px;width:0px;height:9.67px;background:transparent;border-left:1px dotted #999;"></div>
<div style="left:10px;top:386.07px;width:0px;height:26.33px;background:transparent;border-left:1px dotted #999;"></div>
<div style="left:10px;top:436.07px;width:0px;height:76.33px;background:transparent;border-left:1px dotted #999;"></div>
<div style="left:10px;top:536.07px;width:0px;height:93.0px;background:transparent;border-left:1px dotted #999;"></div>
<div style="left:10px;top:652.73px;width:0px;height:26.33px;background:transparent;border-left:1px dotted #999;"></div>
<div style="left:10px;top:702.73px;width:0px;height:72.67px;background:transparent;border-left:1px dotted #999;"></div>
<svg style="left:3.0px;top:158.0px" width="14" height="11" viewBox="0 0 14 11"><path d="M0.7 9.2 V1.1 Q0.7 0.5 1.3 0.5 H5.4 L6.7 2.3 H10.5 Q11 2.3 11 2.9 V3.8 H4.6 L1.6 9.2 Z" fill="#f9f190" stroke="#b0a45a" stroke-width="0.6"/><path d="M4.5 3.6 H13.5 L10.9 9.5 H1.3 Z" fill="#ffcc38" stroke="#b48a20" stroke-width="0.5"/><path d="M13.3 3.8 L10.8 9.4 H5.5 Z" fill="#f4aa18" opacity="0.75"/><path d="M1.2 9.6 H10.9" stroke="#3a2c10" stroke-width="0.8"/></svg>
<span class="t" style="left:21.0px;top:152.4px;font-size:11.8px;color:#000;">All</span>
<svg style="left:3.0px;top:174.67px" width="14" height="11" viewBox="0 0 14 11"><path d="M0.7 9.2 V1.1 Q0.7 0.5 1.3 0.5 H5.4 L6.7 2.3 H10.5 Q11 2.3 11 2.9 V3.8 H4.6 L1.6 9.2 Z" fill="#f9f190" stroke="#b0a45a" stroke-width="0.6"/><path d="M4.5 3.6 H13.5 L10.9 9.5 H1.3 Z" fill="#ffcc38" stroke="#b48a20" stroke-width="0.5"/><path d="M13.3 3.8 L10.8 9.4 H5.5 Z" fill="#f4aa18" opacity="0.75"/><path d="M1.2 9.6 H10.9" stroke="#3a2c10" stroke-width="0.8"/></svg>
<span class="t" style="left:21.0px;top:169.07px;font-size:11.8px;color:#000;">Recents</span>
<svg style="left:3.0px;top:191.33px" width="14" height="11" viewBox="0 0 14 11"><path d="M0.7 9.2 V1.1 Q0.7 0.5 1.3 0.5 H5.4 L6.7 2.3 H10.5 Q11 2.3 11 2.9 V3.8 H4.6 L1.6 9.2 Z" fill="#f9f190" stroke="#b0a45a" stroke-width="0.6"/><path d="M4.5 3.6 H13.5 L10.9 9.5 H1.3 Z" fill="#ffcc38" stroke="#b48a20" stroke-width="0.5"/><path d="M13.3 3.8 L10.8 9.4 H5.5 Z" fill="#f4aa18" opacity="0.75"/><path d="M1.2 9.6 H10.9" stroke="#3a2c10" stroke-width="0.8"/></svg>
<span class="t" style="left:21.0px;top:185.73px;font-size:11.8px;color:#000;">Engine</span>
<svg style="left:18.6px;top:208.0px" width="14" height="11" viewBox="0 0 14 11"><path d="M0.7 9.2 V1.1 Q0.7 0.5 1.3 0.5 H5.4 L6.7 2.3 H10.5 Q11 2.3 11 2.9 V3.8 H4.6 L1.6 9.2 Z" fill="#f9f190" stroke="#b0a45a" stroke-width="0.6"/><path d="M4.5 3.6 H13.5 L10.9 9.5 H1.3 Z" fill="#ffcc38" stroke="#b48a20" stroke-width="0.5"/><path d="M13.3 3.8 L10.8 9.4 H5.5 Z" fill="#f4aa18" opacity="0.75"/><path d="M1.2 9.6 H10.9" stroke="#3a2c10" stroke-width="0.8"/></svg>
<svg style="left:6px;top:208.1px" width="9" height="9" viewBox="0 0 9 9"><rect x="0.5" y="0.5" width="8" height="8" fill="#fff" stroke="#9a9a9a"/><path d="M2.2 4.5H6.8M4.5 2.2V6.8" stroke="#3050a0" stroke-width="1"/></svg>
<div style="left:15px;top:212.4px;width:4px;height:0px;background:transparent;border-top:1px dotted #999;"></div>
<span class="t" style="left:36.8px;top:202.4px;font-size:11.8px;color:#000;">Editor</span>
<svg style="left:20px;top:222.77px" width="12" height="12" viewBox="0 0 12 12"><path d="M0.3 1.8 L5.6 0.1 L11.7 1.8 V8.3 L5.8 11.9 L0.6 8.8 Z" fill="#ecb612"/><path d="M3.2 2.6 H7.6 V6 H3.2 Z" fill="#f8d848"/><path d="M2.7 1.2 V10 M8.3 1 V10.3 M0.4 6.4 H11.6 M0.4 3 L2.7 2.4 M8.3 2.4 L11.6 3" stroke="#5e5a22" stroke-width="0.8" fill="none" opacity="0.85"/><path d="M0.3 1.8 L5.6 0.1 L11.7 1.8" stroke="#7a6a18" stroke-width="0.6" fill="none"/></svg>
<div style="left:11px;top:229.07px;width:9px;height:0px;background:transparent;border-top:1px dotted #999;"></div>
<span class="t" style="left:36.8px;top:219.07px;font-size:11.8px;color:#000;letter-spacing:-0.076px;">AnimationPreview</span>
<svg style="left:20px;top:239.43px" width="12" height="12" viewBox="0 0 12 12"><path d="M0.3 1.8 L5.6 0.1 L11.7 1.8 V8.3 L5.8 11.9 L0.6 8.8 Z" fill="#ecb612"/><path d="M3.2 2.6 H7.6 V6 H3.2 Z" fill="#f8d848"/><path d="M2.7 1.2 V10 M8.3 1 V10.3 M0.4 6.4 H11.6 M0.4 3 L2.7 2.4 M8.3 2.4 L11.6 3" stroke="#5e5a22" stroke-width="0.8" fill="none" opacity="0.85"/><path d="M0.3 1.8 L5.6 0.1 L11.7 1.8" stroke="#7a6a18" stroke-width="0.6" fill="none"/></svg>
<div style="left:11px;top:245.73px;width:9px;height:0px;background:transparent;border-top:1px dotted #999;"></div>
<span class="t" style="left:36.8px;top:235.73px;font-size:11.8px;color:#000;">Engine</span>
<svg style="left:20px;top:256.1px" width="12" height="12" viewBox="0 0 12 12"><path d="M0.3 1.8 L5.6 0.1 L11.7 1.8 V8.3 L5.8 11.9 L0.6 8.8 Z" fill="#ecb612"/><path d="M3.2 2.6 H7.6 V6 H3.2 Z" fill="#f8d848"/><path d="M2.7 1.2 V10 M8.3 1 V10.3 M0.4 6.4 H11.6 M0.4 3 L2.7 2.4 M8.3 2.4 L11.6 3" stroke="#5e5a22" stroke-width="0.8" fill="none" opacity="0.85"/><path d="M0.3 1.8 L5.6 0.1 L11.7 1.8" stroke="#7a6a18" stroke-width="0.6" fill="none"/></svg>
<div style="left:11px;top:262.4px;width:9px;height:0px;background:transparent;border-top:1px dotted #999;"></div>
<span class="t" style="left:36.8px;top:252.4px;font-size:11.8px;color:#000;">Gizmos</span>
<svg style="left:20px;top:272.77px" width="12" height="12" viewBox="0 0 12 12"><path d="M0.3 1.8 L5.6 0.1 L11.7 1.8 V8.3 L5.8 11.9 L0.6 8.8 Z" fill="#ecb612"/><path d="M3.2 2.6 H7.6 V6 H3.2 Z" fill="#f8d848"/><path d="M2.7 1.2 V10 M8.3 1 V10.3 M0.4 6.4 H11.6 M0.4 3 L2.7 2.4 M8.3 2.4 L11.6 3" stroke="#5e5a22" stroke-width="0.8" fill="none" opacity="0.85"/><path d="M0.3 1.8 L5.6 0.1 L11.7 1.8" stroke="#7a6a18" stroke-width="0.6" fill="none"/></svg>
<div style="left:11px;top:279.07px;width:9px;height:0px;background:transparent;border-top:1px dotted #999;"></div>
<span class="t" style="left:36.8px;top:269.07px;font-size:11.8px;color:#000;">Terrain</span>
<svg style="left:3.0px;top:291.33px" width="14" height="11" viewBox="0 0 14 11"><path d="M0.7 9.2 V1.1 Q0.7 0.5 1.3 0.5 H5.4 L6.7 2.3 H10.5 Q11 2.3 11 2.9 V3.8 H4.6 L1.6 9.2 Z" fill="#f9f190" stroke="#b0a45a" stroke-width="0.6"/><path d="M4.5 3.6 H13.5 L10.9 9.5 H1.3 Z" fill="#ffcc38" stroke="#b48a20" stroke-width="0.5"/><path d="M13.3 3.8 L10.8 9.4 H5.5 Z" fill="#f4aa18" opacity="0.75"/><path d="M1.2 9.6 H10.9" stroke="#3a2c10" stroke-width="0.8"/></svg>
<span class="t" style="left:21.0px;top:285.73px;font-size:11.8px;color:#000;">Game</span>
<svg style="left:18.6px;top:308.0px" width="14" height="11" viewBox="0 0 14 11"><path d="M0.7 9.2 V1.1 Q0.7 0.5 1.3 0.5 H5.4 L6.7 2.3 H10.5 Q11 2.3 11 2.9 V3.8 H4.6 L1.6 9.2 Z" fill="#f9f190" stroke="#b0a45a" stroke-width="0.6"/><path d="M4.5 3.6 H13.5 L10.9 9.5 H1.3 Z" fill="#ffcc38" stroke="#b48a20" stroke-width="0.5"/><path d="M13.3 3.8 L10.8 9.4 H5.5 Z" fill="#f4aa18" opacity="0.75"/><path d="M1.2 9.6 H10.9" stroke="#3a2c10" stroke-width="0.8"/></svg>
<svg style="left:6px;top:308.1px" width="9" height="9" viewBox="0 0 9 9"><rect x="0.5" y="0.5" width="8" height="8" fill="#fff" stroke="#9a9a9a"/><path d="M2.2 4.5H6.8M4.5 2.2V6.8" stroke="#3050a0" stroke-width="1"/></svg>
<div style="left:15px;top:312.4px;width:4px;height:0px;background:transparent;border-top:1px dotted #999;"></div>
<span class="t" style="left:36.8px;top:302.4px;font-size:11.8px;color:#000;">Assets</span>
<svg style="left:18.6px;top:324.67px" width="14" height="11" viewBox="0 0 14 11"><path d="M0.7 9.2 V1.1 Q0.7 0.5 1.3 0.5 H5.4 L6.7 2.3 H10.5 Q11 2.3 11 2.9 V3.8 H4.6 L1.6 9.2 Z" fill="#f9f190" stroke="#b0a45a" stroke-width="0.6"/><path d="M4.5 3.6 H13.5 L10.9 9.5 H1.3 Z" fill="#ffcc38" stroke="#b48a20" stroke-width="0.5"/><path d="M13.3 3.8 L10.8 9.4 H5.5 Z" fill="#f4aa18" opacity="0.75"/><path d="M1.2 9.6 H10.9" stroke="#3a2c10" stroke-width="0.8"/></svg>
<svg style="left:6px;top:324.77px" width="9" height="9" viewBox="0 0 9 9"><rect x="0.5" y="0.5" width="8" height="8" fill="#fff" stroke="#9a9a9a"/><path d="M2.2 4.5H6.8M4.5 2.2V6.8" stroke="#3050a0" stroke-width="1"/></svg>
<div style="left:15px;top:329.07px;width:4px;height:0px;background:transparent;border-top:1px dotted #999;"></div>
<span class="t" style="left:36.8px;top:319.07px;font-size:11.8px;color:#000;">Editor</span>
<svg style="left:3.0px;top:341.33px" width="14" height="11" viewBox="0 0 14 11"><path d="M0.7 9.2 V1.1 Q0.7 0.5 1.3 0.5 H5.4 L6.7 2.3 H10.5 Q11 2.3 11 2.9 V3.8 H4.6 L1.6 9.2 Z" fill="#f9f190" stroke="#b0a45a" stroke-width="0.6"/><path d="M4.5 3.6 H13.5 L10.9 9.5 H1.3 Z" fill="#ffcc38" stroke="#b48a20" stroke-width="0.5"/><path d="M13.3 3.8 L10.8 9.4 H5.5 Z" fill="#f4aa18" opacity="0.75"/><path d="M1.2 9.6 H10.9" stroke="#3a2c10" stroke-width="0.8"/></svg>
<span class="t" style="left:21.0px;top:335.73px;font-size:11.8px;color:#000;letter-spacing:0.046px;">Ezu_EyePotionPRC_6919f8c2-fbe2-7521-b986-2db05dae71a8</span>
<div style="left:35.4px;top:355.0px;width:106px;height:14.6px;background:#f0f0f0;"></div>
<svg style="left:20px;top:356.1px" width="12" height="12" viewBox="0 0 12 12"><path d="M0.3 1.8 L5.6 0.1 L11.7 1.8 V8.3 L5.8 11.9 L0.6 8.8 Z" fill="#ecb612"/><path d="M3.2 2.6 H7.6 V6 H3.2 Z" fill="#f8d848"/><path d="M2.7 1.2 V10 M8.3 1 V10.3 M0.4 6.4 H11.6 M0.4 3 L2.7 2.4 M8.3 2.4 L11.6 3" stroke="#5e5a22" stroke-width="0.8" fill="none" opacity="0.85"/><path d="M0.3 1.8 L5.6 0.1 L11.7 1.8" stroke="#7a6a18" stroke-width="0.6" fill="none"/></svg>
<div style="left:11px;top:362.4px;width:9px;height:0px;background:transparent;border-top:1px dotted #999;"></div>
<span class="t" style="left:36.8px;top:352.4px;font-size:11.8px;color:#000;letter-spacing:-0.161px;">Ezu_EyePotionPRC</span>
<svg style="left:3.0px;top:374.67px" width="14" height="11" viewBox="0 0 14 11"><path d="M0.7 9.2 V1.1 Q0.7 0.5 1.3 0.5 H5.4 L6.7 2.3 H10.5 Q11 2.3 11 2.9 V3.8 H4.6 L1.6 9.2 Z" fill="#f9f190" stroke="#b0a45a" stroke-width="0.6"/><path d="M4.5 3.6 H13.5 L10.9 9.5 H1.3 Z" fill="#ffcc38" stroke="#b48a20" stroke-width="0.5"/><path d="M13.3 3.8 L10.8 9.4 H5.5 Z" fill="#f4aa18" opacity="0.75"/><path d="M1.2 9.6 H10.9" stroke="#3a2c10" stroke-width="0.8"/></svg>
<span class="t" style="left:21.0px;top:369.07px;font-size:11.8px;color:#0a0af0;letter-spacing:0.033px;">Ezu_EyePotionPRC_SL_6f000454-e878-42bf-bc3d-23778608b243</span>
<svg style="left:20px;top:389.43px" width="12" height="12" viewBox="0 0 12 12"><path d="M0.3 1.8 L5.6 0.1 L11.7 1.8 V8.3 L5.8 11.9 L0.6 8.8 Z" fill="#ecb612"/><path d="M3.2 2.6 H7.6 V6 H3.2 Z" fill="#f8d848"/><path d="M2.7 1.2 V10 M8.3 1 V10.3 M0.4 6.4 H11.6 M0.4 3 L2.7 2.4 M8.3 2.4 L11.6 3" stroke="#5e5a22" stroke-width="0.8" fill="none" opacity="0.85"/><path d="M0.3 1.8 L5.6 0.1 L11.7 1.8" stroke="#7a6a18" stroke-width="0.6" fill="none"/></svg>
<div style="left:11px;top:395.73px;width:9px;height:0px;background:transparent;border-top:1px dotted #999;"></div>
<span class="t" style="left:36.8px;top:385.73px;font-size:11.8px;color:#000;letter-spacing:-0.161px;">Ezu_EyePotionPRC</span>
<svg style="left:20px;top:406.1px" width="12" height="12" viewBox="0 0 12 12"><path d="M0.3 1.8 L5.6 0.1 L11.7 1.8 V8.3 L5.8 11.9 L0.6 8.8 Z" fill="#ecb612"/><path d="M3.2 2.6 H7.6 V6 H3.2 Z" fill="#f8d848"/><path d="M2.7 1.2 V10 M8.3 1 V10.3 M0.4 6.4 H11.6 M0.4 3 L2.7 2.4 M8.3 2.4 L11.6 3" stroke="#5e5a22" stroke-width="0.8" fill="none" opacity="0.85"/><path d="M0.3 1.8 L5.6 0.1 L11.7 1.8" stroke="#7a6a18" stroke-width="0.6" fill="none"/></svg>
<div style="left:11px;top:412.4px;width:9px;height:0px;background:transparent;border-top:1px dotted #999;"></div>
<span class="t" style="left:36.8px;top:402.4px;font-size:11.8px;color:#000;letter-spacing:-0.173px;">Ezu_EyePotionPRC_SL</span>
<svg style="left:3.0px;top:424.67px" width="14" height="11" viewBox="0 0 14 11"><path d="M0.7 9.2 V1.1 Q0.7 0.5 1.3 0.5 H5.4 L6.7 2.3 H10.5 Q11 2.3 11 2.9 V3.8 H4.6 L1.6 9.2 Z" fill="#f9f190" stroke="#b0a45a" stroke-width="0.6"/><path d="M4.5 3.6 H13.5 L10.9 9.5 H1.3 Z" fill="#ffcc38" stroke="#b48a20" stroke-width="0.5"/><path d="M13.3 3.8 L10.8 9.4 H5.5 Z" fill="#f4aa18" opacity="0.75"/><path d="M1.2 9.6 H10.9" stroke="#3a2c10" stroke-width="0.8"/></svg>
<span class="t" style="left:21.0px;top:419.07px;font-size:11.8px;color:#000;">Gustav</span>
<svg style="left:18.6px;top:441.33px" width="14" height="11" viewBox="0 0 14 11"><path d="M0.7 9.2 V1.1 Q0.7 0.5 1.3 0.5 H5.4 L6.7 2.3 H10.5 Q11 2.3 11 2.9 V3.8 H4.6 L1.6 9.2 Z" fill="#f9f190" stroke="#b0a45a" stroke-width="0.6"/><path d="M4.5 3.6 H13.5 L10.9 9.5 H1.3 Z" fill="#ffcc38" stroke="#b48a20" stroke-width="0.5"/><path d="M13.3 3.8 L10.8 9.4 H5.5 Z" fill="#f4aa18" opacity="0.75"/><path d="M1.2 9.6 H10.9" stroke="#3a2c10" stroke-width="0.8"/></svg>
<svg style="left:6px;top:441.43px" width="9" height="9" viewBox="0 0 9 9"><rect x="0.5" y="0.5" width="8" height="8" fill="#fff" stroke="#9a9a9a"/><path d="M2.2 4.5H6.8M4.5 2.2V6.8" stroke="#3050a0" stroke-width="1"/></svg>
<div style="left:15px;top:445.73px;width:4px;height:0px;background:transparent;border-top:1px dotted #999;"></div>
<span class="t" style="left:36.8px;top:435.73px;font-size:11.8px;color:#000;">Assets</span>
<svg style="left:18.6px;top:458.0px" width="14" height="11" viewBox="0 0 14 11"><path d="M0.7 9.2 V1.1 Q0.7 0.5 1.3 0.5 H5.4 L6.7 2.3 H10.5 Q11 2.3 11 2.9 V3.8 H4.6 L1.6 9.2 Z" fill="#f9f190" stroke="#b0a45a" stroke-width="0.6"/><path d="M4.5 3.6 H13.5 L10.9 9.5 H1.3 Z" fill="#ffcc38" stroke="#b48a20" stroke-width="0.5"/><path d="M13.3 3.8 L10.8 9.4 H5.5 Z" fill="#f4aa18" opacity="0.75"/><path d="M1.2 9.6 H10.9" stroke="#3a2c10" stroke-width="0.8"/></svg>
<svg style="left:6px;top:458.1px" width="9" height="9" viewBox="0 0 9 9"><rect x="0.5" y="0.5" width="8" height="8" fill="#fff" stroke="#9a9a9a"/><path d="M2.2 4.5H6.8M4.5 2.2V6.8" stroke="#3050a0" stroke-width="1"/></svg>
<div style="left:15px;top:462.4px;width:4px;height:0px;background:transparent;border-top:1px dotted #999;"></div>
<span class="t" style="left:36.8px;top:452.4px;font-size:11.8px;color:#000;">Editor</span>
<svg style="left:18.6px;top:474.67px" width="14" height="11" viewBox="0 0 14 11"><path d="M0.7 9.2 V1.1 Q0.7 0.5 1.3 0.5 H5.4 L6.7 2.3 H10.5 Q11 2.3 11 2.9 V3.8 H4.6 L1.6 9.2 Z" fill="#f9f190" stroke="#b0a45a" stroke-width="0.6"/><path d="M4.5 3.6 H13.5 L10.9 9.5 H1.3 Z" fill="#ffcc38" stroke="#b48a20" stroke-width="0.5"/><path d="M13.3 3.8 L10.8 9.4 H5.5 Z" fill="#f4aa18" opacity="0.75"/><path d="M1.2 9.6 H10.9" stroke="#3a2c10" stroke-width="0.8"/></svg>
<svg style="left:6px;top:474.77px" width="9" height="9" viewBox="0 0 9 9"><rect x="0.5" y="0.5" width="8" height="8" fill="#fff" stroke="#9a9a9a"/><path d="M2.2 4.5H6.8M4.5 2.2V6.8" stroke="#3050a0" stroke-width="1"/></svg>
<div style="left:15px;top:479.07px;width:4px;height:0px;background:transparent;border-top:1px dotted #999;"></div>
<span class="t" style="left:36.8px;top:469.07px;font-size:11.8px;color:#000;">Generated</span>
<svg style="left:20px;top:489.43px" width="12" height="12" viewBox="0 0 12 12"><path d="M0.3 1.8 L5.6 0.1 L11.7 1.8 V8.3 L5.8 11.9 L0.6 8.8 Z" fill="#ecb612"/><path d="M3.2 2.6 H7.6 V6 H3.2 Z" fill="#f8d848"/><path d="M2.7 1.2 V10 M8.3 1 V10.3 M0.4 6.4 H11.6 M0.4 3 L2.7 2.4 M8.3 2.4 L11.6 3" stroke="#5e5a22" stroke-width="0.8" fill="none" opacity="0.85"/><path d="M0.3 1.8 L5.6 0.1 L11.7 1.8" stroke="#7a6a18" stroke-width="0.6" fill="none"/></svg>
<div style="left:11px;top:495.73px;width:9px;height:0px;background:transparent;border-top:1px dotted #999;"></div>
<span class="t" style="left:36.8px;top:485.73px;font-size:11.8px;color:#000;letter-spacing:-0.027px;">CharacterVisuals</span>
<svg style="left:20px;top:506.1px" width="12" height="12" viewBox="0 0 12 12"><path d="M0.3 1.8 L5.6 0.1 L11.7 1.8 V8.3 L5.8 11.9 L0.6 8.8 Z" fill="#ecb612"/><path d="M3.2 2.6 H7.6 V6 H3.2 Z" fill="#f8d848"/><path d="M2.7 1.2 V10 M8.3 1 V10.3 M0.4 6.4 H11.6 M0.4 3 L2.7 2.4 M8.3 2.4 L11.6 3" stroke="#5e5a22" stroke-width="0.8" fill="none" opacity="0.85"/><path d="M0.3 1.8 L5.6 0.1 L11.7 1.8" stroke="#7a6a18" stroke-width="0.6" fill="none"/></svg>
<div style="left:11px;top:512.4px;width:9px;height:0px;background:transparent;border-top:1px dotted #999;"></div>
<span class="t" style="left:36.8px;top:502.4px;font-size:11.8px;color:#000;letter-spacing:0.082px;">Generated_991c9c7a-fb80-40cb-8f0d-b92d4e80e9b1</span>
<svg style="left:3.0px;top:524.67px" width="14" height="11" viewBox="0 0 14 11"><path d="M0.7 9.2 V1.1 Q0.7 0.5 1.3 0.5 H5.4 L6.7 2.3 H10.5 Q11 2.3 11 2.9 V3.8 H4.6 L1.6 9.2 Z" fill="#f9f190" stroke="#b0a45a" stroke-width="0.6"/><path d="M4.5 3.6 H13.5 L10.9 9.5 H1.3 Z" fill="#ffcc38" stroke="#b48a20" stroke-width="0.5"/><path d="M13.3 3.8 L10.8 9.4 H5.5 Z" fill="#f4aa18" opacity="0.75"/><path d="M1.2 9.6 H10.9" stroke="#3a2c10" stroke-width="0.8"/></svg>
<span class="t" style="left:21.0px;top:519.07px;font-size:11.8px;color:#000;">GustavDev</span>
<svg style="left:18.6px;top:541.33px" width="14" height="11" viewBox="0 0 14 11"><path d="M0.7 9.2 V1.1 Q0.7 0.5 1.3 0.5 H5.4 L6.7 2.3 H10.5 Q11 2.3 11 2.9 V3.8 H4.6 L1.6 9.2 Z" fill="#f9f190" stroke="#b0a45a" stroke-width="0.6"/><path d="M4.5 3.6 H13.5 L10.9 9.5 H1.3 Z" fill="#ffcc38" stroke="#b48a20" stroke-width="0.5"/><path d="M13.3 3.8 L10.8 9.4 H5.5 Z" fill="#f4aa18" opacity="0.75"/><path d="M1.2 9.6 H10.9" stroke="#3a2c10" stroke-width="0.8"/></svg>
<svg style="left:6px;top:541.43px" width="9" height="9" viewBox="0 0 9 9"><rect x="0.5" y="0.5" width="8" height="8" fill="#fff" stroke="#9a9a9a"/><path d="M2.2 4.5H6.8M4.5 2.2V6.8" stroke="#3050a0" stroke-width="1"/></svg>
<div style="left:15px;top:545.73px;width:4px;height:0px;background:transparent;border-top:1px dotted #999;"></div>
<span class="t" style="left:36.8px;top:535.73px;font-size:11.8px;color:#000;">Assets</span>
<svg style="left:18.6px;top:558.0px" width="14" height="11" viewBox="0 0 14 11"><path d="M0.7 9.2 V1.1 Q0.7 0.5 1.3 0.5 H5.4 L6.7 2.3 H10.5 Q11 2.3 11 2.9 V3.8 H4.6 L1.6 9.2 Z" fill="#f9f190" stroke="#b0a45a" stroke-width="0.6"/><path d="M4.5 3.6 H13.5 L10.9 9.5 H1.3 Z" fill="#ffcc38" stroke="#b48a20" stroke-width="0.5"/><path d="M13.3 3.8 L10.8 9.4 H5.5 Z" fill="#f4aa18" opacity="0.75"/><path d="M1.2 9.6 H10.9" stroke="#3a2c10" stroke-width="0.8"/></svg>
<svg style="left:6px;top:558.1px" width="9" height="9" viewBox="0 0 9 9"><rect x="0.5" y="0.5" width="8" height="8" fill="#fff" stroke="#9a9a9a"/><path d="M2.2 4.5H6.8M4.5 2.2V6.8" stroke="#3050a0" stroke-width="1"/></svg>
<div style="left:15px;top:562.4px;width:4px;height:0px;background:transparent;border-top:1px dotted #999;"></div>
<span class="t" style="left:36.8px;top:552.4px;font-size:11.8px;color:#000;">Editor</span>
<svg style="left:18.6px;top:574.67px" width="14" height="11" viewBox="0 0 14 11"><path d="M0.7 9.2 V1.1 Q0.7 0.5 1.3 0.5 H5.4 L6.7 2.3 H10.5 Q11 2.3 11 2.9 V3.8 H4.6 L1.6 9.2 Z" fill="#f9f190" stroke="#b0a45a" stroke-width="0.6"/><path d="M4.5 3.6 H13.5 L10.9 9.5 H1.3 Z" fill="#ffcc38" stroke="#b48a20" stroke-width="0.5"/><path d="M13.3 3.8 L10.8 9.4 H5.5 Z" fill="#f4aa18" opacity="0.75"/><path d="M1.2 9.6 H10.9" stroke="#3a2c10" stroke-width="0.8"/></svg>
<svg style="left:6px;top:574.77px" width="9" height="9" viewBox="0 0 9 9"><rect x="0.5" y="0.5" width="8" height="8" fill="#fff" stroke="#9a9a9a"/><path d="M2.2 4.5H6.8M4.5 2.2V6.8" stroke="#3050a0" stroke-width="1"/></svg>
<div style="left:15px;top:579.07px;width:4px;height:0px;background:transparent;border-top:1px dotted #999;"></div>
<span class="t" style="left:36.8px;top:569.07px;font-size:11.8px;color:#000;">Generated</span>
<svg style="left:18.6px;top:591.33px" width="14" height="11" viewBox="0 0 14 11"><path d="M0.7 9.2 V1.1 Q0.7 0.5 1.3 0.5 H5.4 L6.7 2.3 H10.5 Q11 2.3 11 2.9 V3.8 H4.6 L1.6 9.2 Z" fill="#f9f190" stroke="#b0a45a" stroke-width="0.6"/><path d="M4.5 3.6 H13.5 L10.9 9.5 H1.3 Z" fill="#ffcc38" stroke="#b48a20" stroke-width="0.5"/><path d="M13.3 3.8 L10.8 9.4 H5.5 Z" fill="#f4aa18" opacity="0.75"/><path d="M1.2 9.6 H10.9" stroke="#3a2c10" stroke-width="0.8"/></svg>
<svg style="left:6px;top:591.43px" width="9" height="9" viewBox="0 0 9 9"><rect x="0.5" y="0.5" width="8" height="8" fill="#fff" stroke="#9a9a9a"/><path d="M2.2 4.5H6.8M4.5 2.2V6.8" stroke="#3050a0" stroke-width="1"/></svg>
<div style="left:15px;top:595.73px;width:4px;height:0px;background:transparent;border-top:1px dotted #999;"></div>
<span class="t" style="left:36.8px;top:585.73px;font-size:11.8px;color:#000;">Key_Art</span>
<svg style="left:20px;top:606.1px" width="12" height="12" viewBox="0 0 12 12"><path d="M0.3 1.8 L5.6 0.1 L11.7 1.8 V8.3 L5.8 11.9 L0.6 8.8 Z" fill="#ecb612"/><path d="M3.2 2.6 H7.6 V6 H3.2 Z" fill="#f8d848"/><path d="M2.7 1.2 V10 M8.3 1 V10.3 M0.4 6.4 H11.6 M0.4 3 L2.7 2.4 M8.3 2.4 L11.6 3" stroke="#5e5a22" stroke-width="0.8" fill="none" opacity="0.85"/><path d="M0.3 1.8 L5.6 0.1 L11.7 1.8" stroke="#7a6a18" stroke-width="0.6" fill="none"/></svg>
<div style="left:11px;top:612.4px;width:9px;height:0px;background:transparent;border-top:1px dotted #999;"></div>
<span class="t" style="left:36.8px;top:602.4px;font-size:11.8px;color:#000;letter-spacing:-0.027px;">CharacterVisuals</span>
<svg style="left:20px;top:622.77px" width="12" height="12" viewBox="0 0 12 12"><path d="M0.3 1.8 L5.6 0.1 L11.7 1.8 V8.3 L5.8 11.9 L0.6 8.8 Z" fill="#ecb612"/><path d="M3.2 2.6 H7.6 V6 H3.2 Z" fill="#f8d848"/><path d="M2.7 1.2 V10 M8.3 1 V10.3 M0.4 6.4 H11.6 M0.4 3 L2.7 2.4 M8.3 2.4 L11.6 3" stroke="#5e5a22" stroke-width="0.8" fill="none" opacity="0.85"/><path d="M0.3 1.8 L5.6 0.1 L11.7 1.8" stroke="#7a6a18" stroke-width="0.6" fill="none"/></svg>
<div style="left:11px;top:629.07px;width:9px;height:0px;background:transparent;border-top:1px dotted #999;"></div>
<span class="t" style="left:36.8px;top:619.07px;font-size:11.8px;color:#000;letter-spacing:0.098px;">Generated_28ac9ce2-2aba-8cda-b3b5-6e922f71b6b8</span>
<svg style="left:3.0px;top:641.33px" width="14" height="11" viewBox="0 0 14 11"><path d="M0.7 9.2 V1.1 Q0.7 0.5 1.3 0.5 H5.4 L6.7 2.3 H10.5 Q11 2.3 11 2.9 V3.8 H4.6 L1.6 9.2 Z" fill="#f9f190" stroke="#b0a45a" stroke-width="0.6"/><path d="M4.5 3.6 H13.5 L10.9 9.5 H1.3 Z" fill="#ffcc38" stroke="#b48a20" stroke-width="0.5"/><path d="M13.3 3.8 L10.8 9.4 H5.5 Z" fill="#f4aa18" opacity="0.75"/><path d="M1.2 9.6 H10.9" stroke="#3a2c10" stroke-width="0.8"/></svg>
<span class="t" style="left:21.0px;top:635.73px;font-size:11.8px;color:#000;">GustavX</span>
<svg style="left:18.6px;top:658.0px" width="14" height="11" viewBox="0 0 14 11"><path d="M0.7 9.2 V1.1 Q0.7 0.5 1.3 0.5 H5.4 L6.7 2.3 H10.5 Q11 2.3 11 2.9 V3.8 H4.6 L1.6 9.2 Z" fill="#f9f190" stroke="#b0a45a" stroke-width="0.6"/><path d="M4.5 3.6 H13.5 L10.9 9.5 H1.3 Z" fill="#ffcc38" stroke="#b48a20" stroke-width="0.5"/><path d="M13.3 3.8 L10.8 9.4 H5.5 Z" fill="#f4aa18" opacity="0.75"/><path d="M1.2 9.6 H10.9" stroke="#3a2c10" stroke-width="0.8"/></svg>
<svg style="left:6px;top:658.1px" width="9" height="9" viewBox="0 0 9 9"><rect x="0.5" y="0.5" width="8" height="8" fill="#fff" stroke="#9a9a9a"/><path d="M2.2 4.5H6.8M4.5 2.2V6.8" stroke="#3050a0" stroke-width="1"/></svg>
<div style="left:15px;top:662.4px;width:4px;height:0px;background:transparent;border-top:1px dotted #999;"></div>
<span class="t" style="left:36.8px;top:652.4px;font-size:11.8px;color:#000;">Assets</span>
<svg style="left:20px;top:672.77px" width="12" height="12" viewBox="0 0 12 12"><path d="M0.3 1.8 L5.6 0.1 L11.7 1.8 V8.3 L5.8 11.9 L0.6 8.8 Z" fill="#ecb612"/><path d="M3.2 2.6 H7.6 V6 H3.2 Z" fill="#f8d848"/><path d="M2.7 1.2 V10 M8.3 1 V10.3 M0.4 6.4 H11.6 M0.4 3 L2.7 2.4 M8.3 2.4 L11.6 3" stroke="#5e5a22" stroke-width="0.8" fill="none" opacity="0.85"/><path d="M0.3 1.8 L5.6 0.1 L11.7 1.8" stroke="#7a6a18" stroke-width="0.6" fill="none"/></svg>
<div style="left:11px;top:679.07px;width:9px;height:0px;background:transparent;border-top:1px dotted #999;"></div>
<span class="t" style="left:36.8px;top:669.07px;font-size:11.8px;color:#000;letter-spacing:-0.027px;">CharacterVisuals</span>
<svg style="left:3.0px;top:691.33px" width="14" height="11" viewBox="0 0 14 11"><path d="M0.7 9.2 V1.1 Q0.7 0.5 1.3 0.5 H5.4 L6.7 2.3 H10.5 Q11 2.3 11 2.9 V3.8 H4.6 L1.6 9.2 Z" fill="#f9f190" stroke="#b0a45a" stroke-width="0.6"/><path d="M4.5 3.6 H13.5 L10.9 9.5 H1.3 Z" fill="#ffcc38" stroke="#b48a20" stroke-width="0.5"/><path d="M13.3 3.8 L10.8 9.4 H5.5 Z" fill="#f4aa18" opacity="0.75"/><path d="M1.2 9.6 H10.9" stroke="#3a2c10" stroke-width="0.8"/></svg>
<span class="t" style="left:21.0px;top:685.73px;font-size:11.8px;color:#000;">Shared</span>
<svg style="left:18.6px;top:708.0px" width="14" height="11" viewBox="0 0 14 11"><path d="M0.7 9.2 V1.1 Q0.7 0.5 1.3 0.5 H5.4 L6.7 2.3 H10.5 Q11 2.3 11 2.9 V3.8 H4.6 L1.6 9.2 Z" fill="#f9f190" stroke="#b0a45a" stroke-width="0.6"/><path d="M4.5 3.6 H13.5 L10.9 9.5 H1.3 Z" fill="#ffcc38" stroke="#b48a20" stroke-width="0.5"/><path d="M13.3 3.8 L10.8 9.4 H5.5 Z" fill="#f4aa18" opacity="0.75"/><path d="M1.2 9.6 H10.9" stroke="#3a2c10" stroke-width="0.8"/></svg>
<svg style="left:6px;top:708.1px" width="9" height="9" viewBox="0 0 9 9"><rect x="0.5" y="0.5" width="8" height="8" fill="#fff" stroke="#9a9a9a"/><path d="M2.2 4.5H6.8M4.5 2.2V6.8" stroke="#3050a0" stroke-width="1"/></svg>
<div style="left:15px;top:712.4px;width:4px;height:0px;background:transparent;border-top:1px dotted #999;"></div>
<span class="t" style="left:36.8px;top:702.4px;font-size:11.8px;color:#000;">Assets</span>
<svg style="left:18.6px;top:724.67px" width="14" height="11" viewBox="0 0 14 11"><path d="M0.7 9.2 V1.1 Q0.7 0.5 1.3 0.5 H5.4 L6.7 2.3 H10.5 Q11 2.3 11 2.9 V3.8 H4.6 L1.6 9.2 Z" fill="#f9f190" stroke="#b0a45a" stroke-width="0.6"/><path d="M4.5 3.6 H13.5 L10.9 9.5 H1.3 Z" fill="#ffcc38" stroke="#b48a20" stroke-width="0.5"/><path d="M13.3 3.8 L10.8 9.4 H5.5 Z" fill="#f4aa18" opacity="0.75"/><path d="M1.2 9.6 H10.9" stroke="#3a2c10" stroke-width="0.8"/></svg>
<svg style="left:6px;top:724.77px" width="9" height="9" viewBox="0 0 9 9"><rect x="0.5" y="0.5" width="8" height="8" fill="#fff" stroke="#9a9a9a"/><path d="M2.2 4.5H6.8M4.5 2.2V6.8" stroke="#3050a0" stroke-width="1"/></svg>
<div style="left:15px;top:729.07px;width:4px;height:0px;background:transparent;border-top:1px dotted #999;"></div>
<span class="t" style="left:36.8px;top:719.07px;font-size:11.8px;color:#000;">Generated</span>
<svg style="left:18.6px;top:741.33px" width="14" height="11" viewBox="0 0 14 11"><path d="M0.7 9.2 V1.1 Q0.7 0.5 1.3 0.5 H5.4 L6.7 2.3 H10.5 Q11 2.3 11 2.9 V3.8 H4.6 L1.6 9.2 Z" fill="#f9f190" stroke="#b0a45a" stroke-width="0.6"/><path d="M4.5 3.6 H13.5 L10.9 9.5 H1.3 Z" fill="#ffcc38" stroke="#b48a20" stroke-width="0.5"/><path d="M13.3 3.8 L10.8 9.4 H5.5 Z" fill="#f4aa18" opacity="0.75"/><path d="M1.2 9.6 H10.9" stroke="#3a2c10" stroke-width="0.8"/></svg>
<svg style="left:6px;top:741.43px" width="9" height="9" viewBox="0 0 9 9"><rect x="0.5" y="0.5" width="8" height="8" fill="#fff" stroke="#9a9a9a"/><path d="M2.2 4.5H6.8M4.5 2.2V6.8" stroke="#3050a0" stroke-width="1"/></svg>
<div style="left:15px;top:745.73px;width:4px;height:0px;background:transparent;border-top:1px dotted #999;"></div>
<span class="t" style="left:36.8px;top:735.73px;font-size:11.8px;color:#000;">Key_Art</span>
<svg style="left:18.6px;top:758.0px" width="14" height="11" viewBox="0 0 14 11"><path d="M0.7 9.2 V1.1 Q0.7 0.5 1.3 0.5 H5.4 L6.7 2.3 H10.5 Q11 2.3 11 2.9 V3.8 H4.6 L1.6 9.2 Z" fill="#f9f190" stroke="#b0a45a" stroke-width="0.6"/><path d="M4.5 3.6 H13.5 L10.9 9.5 H1.3 Z" fill="#ffcc38" stroke="#b48a20" stroke-width="0.5"/><path d="M13.3 3.8 L10.8 9.4 H5.5 Z" fill="#f4aa18" opacity="0.75"/><path d="M1.2 9.6 H10.9" stroke="#3a2c10" stroke-width="0.8"/></svg>
<svg style="left:6px;top:758.1px" width="9" height="9" viewBox="0 0 9 9"><rect x="0.5" y="0.5" width="8" height="8" fill="#fff" stroke="#9a9a9a"/><path d="M2.2 4.5H6.8M4.5 2.2V6.8" stroke="#3050a0" stroke-width="1"/></svg>
<div style="left:15px;top:762.4px;width:4px;height:0px;background:transparent;border-top:1px dotted #999;"></div>
<span class="t" style="left:36.8px;top:752.4px;font-size:11.8px;color:#000;">PreProd_Prototypes</span>
</div>
<div class="g" role="grid" aria-label="Resource list">
<div style="left:444.3px;top:131px;width:430.4px;height:646px;background:#ffffff;"></div>
<div style="left:444.3px;top:131px;width:1px;height:629px;background:#dcdcdc;"></div>
<span class="t" style="left:449.3px;top:131.1px;font-size:11.8px;color:#000;letter-spacing:-0.142px;">Name</span>
<span class="t" style="left:790.2px;top:131.1px;font-size:11.8px;color:#000;letter-spacing:0.205px;">Type</span>
<div style="left:785px;top:131px;width:1px;height:629px;background:#ececec;"></div>
<div style="left:446px;top:167.9px;width:428px;height:2px;background:#f6f6f6;"></div>
<div style="left:446px;top:185.39px;width:428px;height:2px;background:#f6f6f6;"></div>
<div style="left:446px;top:202.88px;width:428px;height:2px;background:#f6f6f6;"></div>
<div style="left:446px;top:220.37px;width:428px;height:2px;background:#f6f6f6;"></div>
<div style="left:446px;top:237.86px;width:428px;height:2px;background:#f6f6f6;"></div>
<div style="left:446px;top:255.35px;width:428px;height:2px;background:#f6f6f6;"></div>
<div style="left:446px;top:272.84px;width:428px;height:2px;background:#f6f6f6;"></div>
<div style="left:446px;top:290.33px;width:428px;height:2px;background:#f6f6f6;"></div>
<div style="left:446px;top:307.82px;width:428px;height:2px;background:#f6f6f6;"></div>
<div style="left:446px;top:325.31px;width:428px;height:2px;background:#f6f6f6;"></div>
<div style="left:446px;top:342.8px;width:428px;height:2px;background:#f6f6f6;"></div>
<div style="left:446px;top:360.29px;width:428px;height:2px;background:#f6f6f6;"></div>
<div style="left:446px;top:377.78px;width:428px;height:2px;background:#f6f6f6;"></div>
<div style="left:446px;top:395.27px;width:428px;height:2px;background:#f6f6f6;"></div>
<div style="left:446px;top:412.76px;width:428px;height:2px;background:#f6f6f6;"></div>
<div style="left:446px;top:430.25px;width:428px;height:2px;background:#f6f6f6;"></div>
<div style="left:446px;top:447.74px;width:428px;height:2px;background:#f6f6f6;"></div>
<div style="left:446px;top:465.23px;width:428px;height:2px;background:#f6f6f6;"></div>
<div style="left:446px;top:482.72px;width:428px;height:2px;background:#f6f6f6;"></div>
<div style="left:446px;top:500.21px;width:428px;height:2px;background:#f6f6f6;"></div>
<div style="left:446px;top:517.7px;width:428px;height:2px;background:#f6f6f6;"></div>
<div style="left:446px;top:535.19px;width:428px;height:2px;background:#f6f6f6;"></div>
<div style="left:446px;top:552.68px;width:428px;height:2px;background:#f6f6f6;"></div>
<div style="left:446px;top:570.17px;width:428px;height:2px;background:#f6f6f6;"></div>
<div style="left:446px;top:587.66px;width:428px;height:2px;background:#f6f6f6;"></div>
<div style="left:446px;top:605.15px;width:428px;height:2px;background:#f6f6f6;"></div>
<div style="left:446px;top:622.64px;width:428px;height:2px;background:#f6f6f6;"></div>
<div style="left:446px;top:640.13px;width:428px;height:2px;background:#f6f6f6;"></div>
<div style="left:446px;top:657.62px;width:428px;height:2px;background:#f6f6f6;"></div>
<div style="left:446px;top:675.11px;width:428px;height:2px;background:#f6f6f6;"></div>
<div style="left:446px;top:692.6px;width:428px;height:2px;background:#f6f6f6;"></div>
<div style="left:446px;top:710.09px;width:428px;height:2px;background:#f6f6f6;"></div>
<div style="left:446px;top:727.58px;width:428px;height:2px;background:#f6f6f6;"></div>
<div style="left:446px;top:745.07px;width:428px;height:2px;background:#f6f6f6;"></div>
<div style="left:785px;top:131px;width:1px;height:629px;background:#e8e8e8;"></div>
<svg style="left:458.1px;top:154.7px" width="13" height="11" viewBox="-0.5 -0.5 13 11"><ellipse cx="4.8" cy="8.5" rx="4.4" ry="0.9" fill="#4a4a4a" opacity="0.75"/><circle cx="6.5" cy="4.5" r="4.3" fill="#1b8fe2"/><ellipse cx="6.5" cy="6.3" rx="3.2" ry="2" fill="#3fb6f7"/><path d="M2.4 3.6 A4.3 4.3 0 0 1 10.6 3.6 L9.4 4.6 L8 3.9 L6.6 4.8 L5 4 L3.6 4.7 Z" fill="#07142a"/><path d="M5.6 2 H6.8 M7.6 2.8 H8.8 M6.4 3.2 H7.2" stroke="#e8f0ff" stroke-width="0.6"/></svg>
<span class="t" style="left:476.6px;top:150.5px;font-size:11.8px;color:#000;letter-spacing:-0.239px;">EZU_PRC_EYEC_2_GLASS</span>
<span class="t" style="left:790.4px;top:150.5px;font-size:11.8px;color:#000;letter-spacing:-0.043px;clip-path:inset(0 1px 0 0);">MaterialResou...</span>
<svg style="left:458.1px;top:172.19px" width="13" height="11" viewBox="-0.5 -0.5 13 11"><ellipse cx="4.8" cy="8.5" rx="4.4" ry="0.9" fill="#4a4a4a" opacity="0.75"/><circle cx="6.5" cy="4.5" r="4.3" fill="#1b8fe2"/><ellipse cx="6.5" cy="6.3" rx="3.2" ry="2" fill="#3fb6f7"/><path d="M2.4 3.6 A4.3 4.3 0 0 1 10.6 3.6 L9.4 4.6 L8 3.9 L6.6 4.8 L5 4 L3.6 4.7 Z" fill="#07142a"/><path d="M5.6 2 H6.8 M7.6 2.8 H8.8 M6.4 3.2 H7.2" stroke="#e8f0ff" stroke-width="0.6"/></svg>
<span class="t" style="left:476.6px;top:167.99px;font-size:11.8px;color:#000;letter-spacing:-0.239px;">EZU_PRC_EYEC_3_GLASS</span>
<span class="t" style="left:790.4px;top:167.99px;font-size:11.8px;color:#000;letter-spacing:-0.043px;clip-path:inset(0 1px 0 0);">MaterialResou...</span>
<svg style="left:458.1px;top:189.68px" width="13" height="11" viewBox="-0.5 -0.5 13 11"><ellipse cx="4.8" cy="8.5" rx="4.4" ry="0.9" fill="#4a4a4a" opacity="0.75"/><circle cx="6.5" cy="4.5" r="4.3" fill="#1b8fe2"/><ellipse cx="6.5" cy="6.3" rx="3.2" ry="2" fill="#3fb6f7"/><path d="M2.4 3.6 A4.3 4.3 0 0 1 10.6 3.6 L9.4 4.6 L8 3.9 L6.6 4.8 L5 4 L3.6 4.7 Z" fill="#07142a"/><path d="M5.6 2 H6.8 M7.6 2.8 H8.8 M6.4 3.2 H7.2" stroke="#e8f0ff" stroke-width="0.6"/></svg>
<span class="t" style="left:476.6px;top:185.48px;font-size:11.8px;color:#000;letter-spacing:-0.239px;">EZU_PRC_EYEC_4_GLASS</span>
<span class="t" style="left:790.4px;top:185.48px;font-size:11.8px;color:#000;letter-spacing:-0.043px;clip-path:inset(0 1px 0 0);">MaterialResou...</span>
<svg style="left:458.1px;top:207.17px" width="13" height="11" viewBox="-0.5 -0.5 13 11"><ellipse cx="4.8" cy="8.5" rx="4.4" ry="0.9" fill="#4a4a4a" opacity="0.75"/><circle cx="6.5" cy="4.5" r="4.3" fill="#1b8fe2"/><ellipse cx="6.5" cy="6.3" rx="3.2" ry="2" fill="#3fb6f7"/><path d="M2.4 3.6 A4.3 4.3 0 0 1 10.6 3.6 L9.4 4.6 L8 3.9 L6.6 4.8 L5 4 L3.6 4.7 Z" fill="#07142a"/><path d="M5.6 2 H6.8 M7.6 2.8 H8.8 M6.4 3.2 H7.2" stroke="#e8f0ff" stroke-width="0.6"/></svg>
<span class="t" style="left:476.6px;top:202.97px;font-size:11.8px;color:#000;letter-spacing:-0.239px;">EZU_PRC_EYEC_6_GLASS</span>
<span class="t" style="left:790.4px;top:202.97px;font-size:11.8px;color:#000;letter-spacing:-0.043px;clip-path:inset(0 1px 0 0);">MaterialResou...</span>
<svg style="left:458.1px;top:224.66px" width="13" height="11" viewBox="-0.5 -0.5 13 11"><ellipse cx="4.8" cy="8.5" rx="4.4" ry="0.9" fill="#4a4a4a" opacity="0.75"/><circle cx="6.5" cy="4.5" r="4.3" fill="#1b8fe2"/><ellipse cx="6.5" cy="6.3" rx="3.2" ry="2" fill="#3fb6f7"/><path d="M2.4 3.6 A4.3 4.3 0 0 1 10.6 3.6 L9.4 4.6 L8 3.9 L6.6 4.8 L5 4 L3.6 4.7 Z" fill="#07142a"/><path d="M5.6 2 H6.8 M7.6 2.8 H8.8 M6.4 3.2 H7.2" stroke="#e8f0ff" stroke-width="0.6"/></svg>
<span class="t" style="left:476.6px;top:220.46px;font-size:11.8px;color:#000;letter-spacing:-0.239px;">EZU_PRC_EYEC_7_GLASS</span>
<span class="t" style="left:790.4px;top:220.46px;font-size:11.8px;color:#000;letter-spacing:-0.043px;clip-path:inset(0 1px 0 0);">MaterialResou...</span>
<svg style="left:458.1px;top:242.15px" width="13" height="11" viewBox="-0.5 -0.5 13 11"><ellipse cx="4.8" cy="8.5" rx="4.4" ry="0.9" fill="#4a4a4a" opacity="0.75"/><circle cx="6.5" cy="4.5" r="4.3" fill="#1b8fe2"/><ellipse cx="6.5" cy="6.3" rx="3.2" ry="2" fill="#3fb6f7"/><path d="M2.4 3.6 A4.3 4.3 0 0 1 10.6 3.6 L9.4 4.6 L8 3.9 L6.6 4.8 L5 4 L3.6 4.7 Z" fill="#07142a"/><path d="M5.6 2 H6.8 M7.6 2.8 H8.8 M6.4 3.2 H7.2" stroke="#e8f0ff" stroke-width="0.6"/></svg>
<span class="t" style="left:476.6px;top:237.95px;font-size:11.8px;color:#000;letter-spacing:-0.239px;">EZU_PRC_EYEC_8_GLASS</span>
<span class="t" style="left:790.4px;top:237.95px;font-size:11.8px;color:#000;letter-spacing:-0.043px;clip-path:inset(0 1px 0 0);">MaterialResou...</span>
<div style="left:444.3px;top:256.14px;width:341px;height:16.6px;background:#0078d7;"></div>
<svg style="left:458.1px;top:259.64px" width="13" height="11" viewBox="-0.5 -0.5 13 11"><ellipse cx="4.6" cy="8.4" rx="5" ry="1.7" fill="#fff"/><circle cx="6.4" cy="4.5" r="5.1" fill="#fff"/><ellipse cx="4.8" cy="8.5" rx="4.4" ry="0.9" fill="#4a4a4a" opacity="0.75"/><circle cx="6.5" cy="4.5" r="4.3" fill="#1b8fe2"/><ellipse cx="6.5" cy="6.3" rx="3.2" ry="2" fill="#3fb6f7"/><path d="M2.4 3.6 A4.3 4.3 0 0 1 10.6 3.6 L9.4 4.6 L8 3.9 L6.6 4.8 L5 4 L3.6 4.7 Z" fill="#07142a"/><path d="M5.6 2 H6.8 M7.6 2.8 H8.8 M6.4 3.2 H7.2" stroke="#e8f0ff" stroke-width="0.6"/></svg>
<span class="t" style="left:476.6px;top:255.44px;font-size:11.8px;color:#fff;letter-spacing:-0.199px;">EZU_PRC_EYEC_SOLVENTS</span>
<span class="t" style="left:790.4px;top:255.44px;font-size:11.8px;color:#000;letter-spacing:-0.043px;clip-path:inset(0 1px 0 0);">MaterialResou...</span>
<div style="left:444.3px;top:760.7px;width:430.4px;height:16.3px;background:#f0f0f0;"></div>
<div style="left:462px;top:767.2px;width:84px;height:2.6px;background:#868686;border-radius:1.3px;"></div>
</div>
<div class="g" role="complementary" aria-label="Options and properties">
<div style="left:874.6px;top:131px;width:9.2px;height:647px;background:#4b4b4b;"></div>
<div style="left:874.6px;top:131px;width:58.4px;height:22px;background:#4a4a4a;"></div>
<svg style="left:880px;top:132px" width="6" height="16" viewBox="880 132 6 16"><path d="M882.9 134.4 V146.4" stroke="#e8e8e8" stroke-width="1.6" stroke-dasharray="1.5 1.5"/></svg>
<span class="t" style="left:894.5px;top:132.0px;font-size:12.4px;color:#f0f0f0;letter-spacing:0.328px;">Options</span>
<div style="left:878.6px;top:152.7px;width:54.4px;height:151.3px;background:#b0b6c5;"></div>
<svg style="left:878px;top:152px" width="55" height="152" viewBox="878 152 55 152"><g stroke="#1c1c1c" stroke-width="1" fill="none"><path d="M878.6 164.2 L933 155"/><path d="M878.6 213.8 L933 198"/><path d="M878.6 216.5 L933 216.5"/><path d="M878.6 238 L933 217"/><path d="M878.6 281 L933 253"/></g></svg>
<div style="left:883.8px;top:304px;width:49.2px;height:71.6px;background:#4a4a4a;"></div>
<svg style="left:910px;top:311px" width="10" height="12" viewBox="0 0 10 12"><path d="M2.8 5.6 V3.8 Q2.8 1.4 5 1.4 Q7.2 1.4 7.2 3.8 V5.6" fill="none" stroke="#c4c4c4" stroke-width="1.3"/><rect x="1.4" y="5.2" width="7.2" height="5.6" rx="0.6" fill="#bcbcbc"/><path d="M5 6.6 V9.6" stroke="#4a4a4a" stroke-width="1.2"/></svg>
<div style="left:905px;top:337.8px;width:10px;height:22.4px;background:#f6cf62;border:1px solid #e6a826;border-radius:2px;box-sizing:border-box;"></div>
<span class="t" style="left:918.4px;top:340.2px;font-size:9.6px;color:#2a48c8;font-weight:bold;line-height:10px;">A</span>
<span class="t" style="left:918.8px;top:348.0px;font-size:9.2px;color:#982828;font-weight:bold;line-height:10px;">Z</span>
<svg style="left:927px;top:340px" width="6" height="17" viewBox="927 340 6 17"><path d="M931 340.8 V354" stroke="#111" stroke-width="1.1"/><path d="M928.2 351.4 L931 355.8 L933.8 351.4 Z" fill="#111"/></svg>
<div style="left:883.8px;top:375.6px;width:49.2px;height:398.4px;background:#333333;"></div>
<div style="left:883.8px;top:375.6px;width:49.2px;height:1px;background:#3a3a3a;"></div>
<div style="left:883.8px;top:376.5px;width:49.2px;height:19.6px;background:#494949;"></div>
<div style="left:883.8px;top:490.2px;width:49.2px;height:20px;background:#494949;"></div>
<div style="left:883.8px;top:396px;width:2px;height:300px;background:#404040;"></div>
<div style="left:883.8px;top:695.6px;width:49.2px;height:1px;background:#404040;"></div>
<div style="left:885.8px;top:419.6px;width:47.2px;height:1px;background:#393939;"></div>
<div style="left:885.8px;top:442.8px;width:47.2px;height:1px;background:#393939;"></div>
<div style="left:885.8px;top:466px;width:47.2px;height:1px;background:#393939;"></div>
<div style="left:885.8px;top:533.6px;width:47.2px;height:1px;background:#393939;"></div>
<div style="left:885.8px;top:556.6px;width:47.2px;height:1px;background:#393939;"></div>
<div style="left:885.8px;top:579.2px;width:47.2px;height:1px;background:#393939;"></div>
<div style="left:885.8px;top:602.4px;width:47.2px;height:1px;background:#393939;"></div>
<div style="left:885.8px;top:625.4px;width:47.2px;height:1px;background:#393939;"></div>
<div style="left:885.8px;top:648.4px;width:47.2px;height:1px;background:#393939;"></div>
<div style="left:885.8px;top:671.4px;width:47.2px;height:1px;background:#393939;"></div>
<span class="t" style="left:909.4px;top:376.6px;font-size:11.3px;color:#e2e2e2;">Base</span>
<span class="t" style="left:908.4px;top:491.5px;font-size:11.3px;color:#ececec;">Misc</span>
<span class="t" style="left:900.8px;top:397.5px;font-size:11.3px;color:#f2f2f2;">Custo</span>
<span class="t" style="left:900.8px;top:420.3px;font-size:11.3px;color:#f2f2f2;">File N</span>
<span class="t" style="left:900.8px;top:443.9px;font-size:11.3px;color:#f2f2f2;">GUID</span>
<span class="t" style="left:900.8px;top:467.3px;font-size:11.3px;color:#f2f2f2;">Name</span>
<span class="t" style="left:900.8px;top:513.4px;font-size:11.3px;color:#f2f2f2;">Active</span>
<span class="t" style="left:900.8px;top:535.8px;font-size:11.3px;color:#f2f2f2;">Custo</span>
<span class="t" style="left:902.6px;top:558.2px;font-size:11.3px;color:#f2f2f2;">Editor</span>
<span class="t" style="left:902.6px;top:580.9px;font-size:11.3px;color:#f2f2f2;">Materi</span>
<span class="t" style="left:902.6px;top:604.0px;font-size:11.3px;color:#f2f2f2;">Packa</span>
<span class="t" style="left:902.6px;top:627.0px;font-size:11.3px;color:#f2f2f2;">Rende</span>
<span class="t" style="left:902.6px;top:650.0px;font-size:11.3px;color:#f2f2f2;">Sourc</span>
<span class="t" style="left:902.6px;top:673.2px;font-size:11.3px;color:#f2f2f2;">Sourc</span>
<div style="left:883.8px;top:774px;width:49.2px;height:4px;background:#4a4a4a;"></div>
</div>
<div class="g" role="menu" aria-label="Resource context menu">
<div style="left:638px;top:268px;width:272px;height:292.8px;background:#fdfdfd;border:1px solid #b0b0b0;box-sizing:border-box;box-shadow:1px 1px 2px rgba(0,0,0,0.25);"></div>
<div style="left:639px;top:269px;width:20px;height:290px;background:linear-gradient(90deg,#fdfdfd,#f0f0f0);"></div>
<div style="left:639.3px;top:389px;width:268.7px;height:20px;background:#b5d7f3;border:1px solid #3a96dd;box-sizing:border-box;"></div>
<div style="left:665px;top:411.3px;width:243px;height:1px;background:#d0d0d0;"></div>
<div style="left:665px;top:555.6px;width:243px;height:1px;background:#dcdcdc;"></div>
<span class="t" style="left:668.6px;top:269.0px;font-size:12.3px;color:#101010;letter-spacing:-0.349px;">Open...</span>
<span class="t" style="left:668.6px;top:289.0px;font-size:12.3px;color:#101010;letter-spacing:-0.104px;">Rename / move...</span>
<span class="t" style="left:668.6px;top:309.0px;font-size:12.3px;color:#101010;letter-spacing:0.034px;">Open in editor...</span>
<span class="t" style="left:668.6px;top:329.0px;font-size:12.3px;color:#101010;letter-spacing:-0.173px;">Create New From Selected...</span>
<span class="t" style="left:668.6px;top:349.0px;font-size:12.3px;color:#101010;letter-spacing:-0.027px;">Create New Material Only...</span>
<span class="t" style="left:668.6px;top:369.0px;font-size:12.3px;color:#101010;">Convert To VirtualTexture Material...</span>
<span class="t" style="left:668.6px;top:389.0px;font-size:12.3px;color:#101010;letter-spacing:0.026px;">Override In the Active Mod...</span>
<span class="t" style="left:668.6px;top:414.3px;font-size:12.3px;color:#101010;letter-spacing:-0.079px;">Find references to this resource</span>
<span class="t" style="left:668.6px;top:434.3px;font-size:12.3px;color:#101010;letter-spacing:-0.021px;">List dependencies of this resource</span>
<span class="t" style="left:668.6px;top:454.3px;font-size:12.3px;color:#101010;letter-spacing:0.147px;">Copy Name to Clipboard</span>
<span class="t" style="left:668.6px;top:474.3px;font-size:12.3px;color:#101010;letter-spacing:0.059px;">Copy GUID to Clipboard</span>
<span class="t" style="left:668.6px;top:494.3px;font-size:12.3px;color:#101010;letter-spacing:-0.012px;">Copy Name_GUID to Clipboard</span>
<span class="t" style="left:668.6px;top:514.3px;font-size:12.3px;color:#101010;letter-spacing:-0.021px;">Copy (Type)Name_GUID to Clipboard</span>
<span class="t" style="left:668.6px;top:534.3px;font-size:12.3px;color:#101010;letter-spacing:0.146px;">Copy Name &lt;GUID&gt; to Clipboard</span>
</div>
<div class="g" role="note" aria-label="Annotations">
<svg style="left:370px;top:336px" width="110" height="54" viewBox="370 336 110 54"><g fill="#ea1f27" stroke="#ea1f27" stroke-linecap="round"><path d="M377.3 345.1 L389.9 338.9 L389.9 351.3 Z" stroke="none"/><path d="M389 345.1 H445.2" stroke-width="2.4"/><path d="M388.3 380.8 L400.9 374.6 L400.9 387 Z" stroke="none"/><path d="M400 380.8 H469.6" stroke-width="2.4"/></g></svg>
<span class="t" style="left:456.6px;top:337.3px;font-size:17.0px;color:#ea1f27;font-weight:bold;line-height:22px;transform:scaleX(0.9863);transform-origin:0 50%;">Main Mod Folder</span>
<span class="t" style="left:474px;top:368.8px;font-size:17.0px;color:#ea1f27;font-weight:bold;line-height:22px;transform:scaleX(0.9564);transform-origin:0 50%;">Patch Mod Folder</span>
</div>
</div>
</body></html>
